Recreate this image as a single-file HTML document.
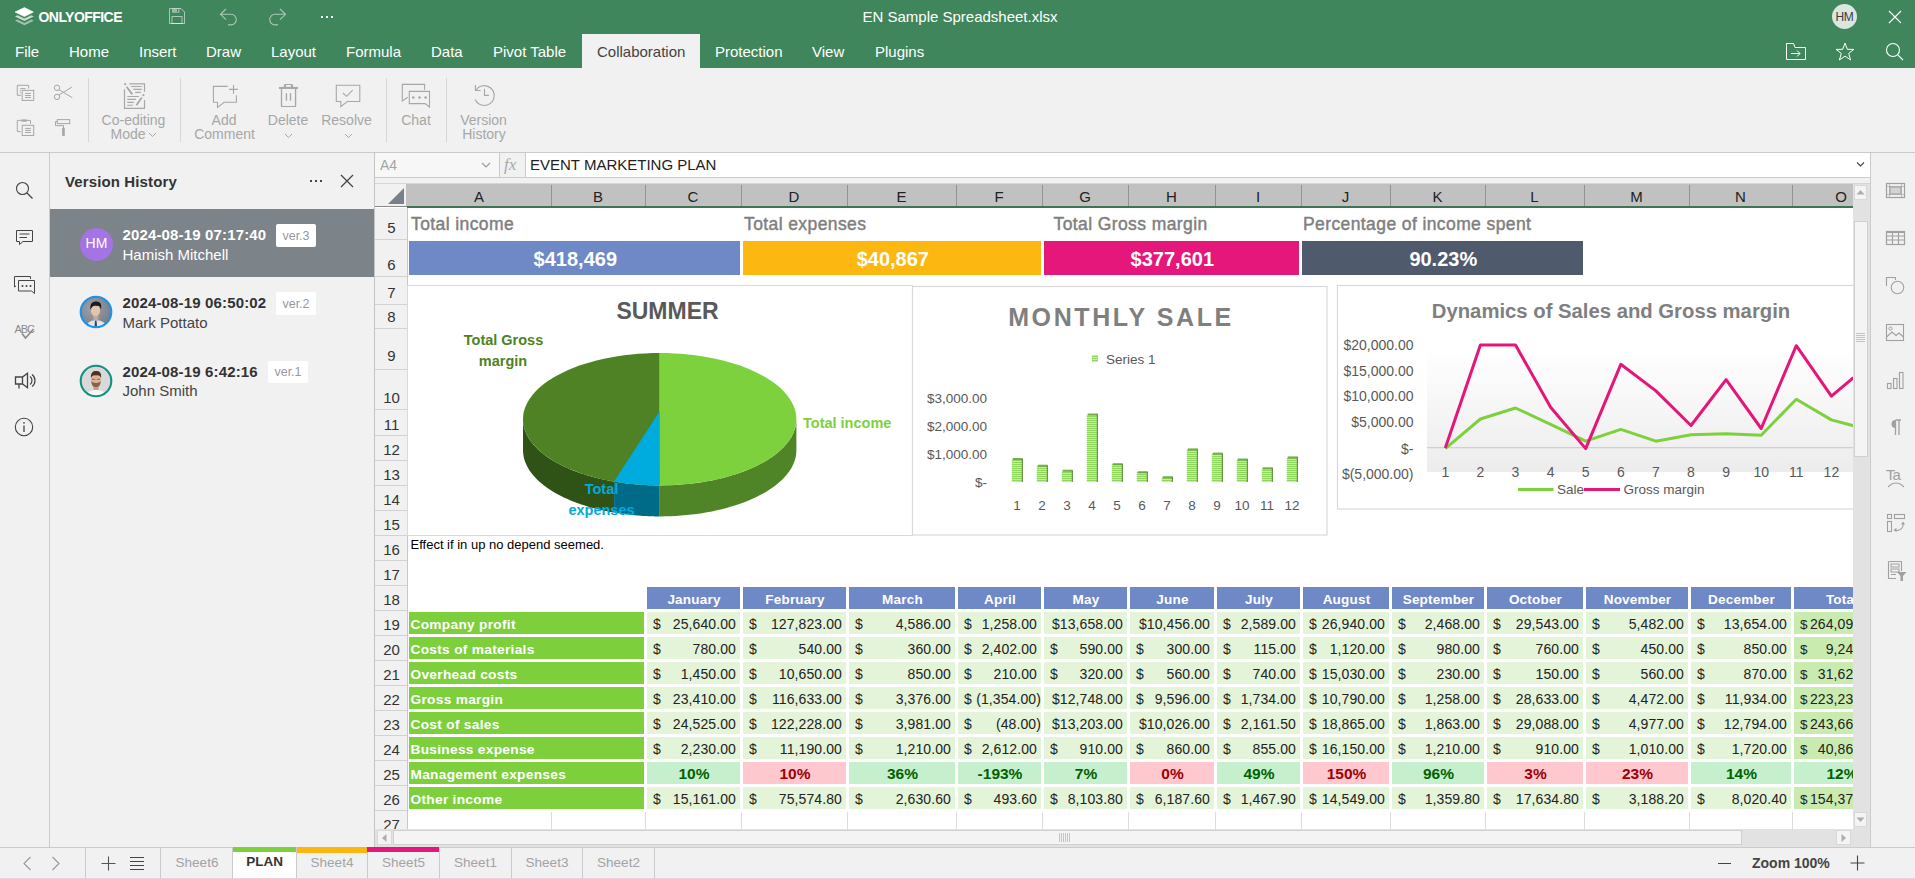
<!DOCTYPE html>
<html><head><meta charset="utf-8"><title>ONLYOFFICE</title>
<style>
html,body{margin:0;padding:0;}
body{width:1915px;height:879px;position:relative;overflow:hidden;background:#f1f1f1;font-family:"Liberation Sans", sans-serif;}
.t{position:absolute;white-space:nowrap;}
.r{position:absolute;}
</style></head><body>
<div class="r" style="left:0px;top:0px;width:1915px;height:68px;background:#40865c;"></div>
<svg class="r" style="left:14px;top:7px;" width="21" height="20" viewBox="0 0 21 20">
<path d="M10.4 0.6 L19.4 5.1 L10.4 9.6 L1 5.1 Z" fill="#fff" stroke="#fff" stroke-width="0.6" stroke-linejoin="round"/>
<path d="M1 9.4 L3.4 8.2 L10.4 11.6 L17.4 8.2 L19.8 9.4 L10.4 13.9 Z" fill="#fff" opacity="0.72"/>
<path d="M1 13.8 L3.4 12.6 L10.4 16 L17.4 12.6 L19.8 13.8 L10.4 18.3 Z" fill="#fff" opacity="0.5"/>
</svg>
<div class="t" style="left:38.5px;top:9.65px;font-size:14px;line-height:14px;color:#fff;font-weight:700;letter-spacing:-0.55px;">ONLYOFFICE</div>
<svg class="r" style="left:168px;top:7px;" width="18" height="18" viewBox="0 0 18 18">
<path d="M1.5 1.5 H13 L16.5 5 V16.5 H1.5 Z" fill="none" stroke="#fff" stroke-opacity="0.55" stroke-width="1"/>
<rect x="4" y="1.5" width="7.5" height="4.3" fill="#fff" fill-opacity="0.45"/><rect x="9" y="2" width="1.2" height="2.8" fill="#40865c"/>
<rect x="4" y="9.5" width="10" height="7" fill="none" stroke="#fff" stroke-opacity="0.55"/>
</svg>
<svg class="r" style="left:219px;top:7px;" width="19" height="19" viewBox="0 0 19 19">
<path d="M7 2 L1.5 7.3 L7 12.7 M1.5 7.3 H12 A5.3 5.3 0 0 1 12 17.9 H9" fill="none" stroke="#fff" stroke-opacity="0.55" stroke-width="1.1"/>
</svg>
<svg class="r" style="left:268px;top:7px;" width="19" height="19" viewBox="0 0 19 19">
<path d="M12 2 L17.5 7.3 L12 12.7 M17.5 7.3 H7 A5.3 5.3 0 0 0 7 17.9 H10" fill="none" stroke="#fff" stroke-opacity="0.55" stroke-width="1.1"/>
</svg>
<div class="r" style="left:321px;top:16px;width:2px;height:2px;background:#fff;"></div>
<div class="r" style="left:326px;top:16px;width:2px;height:2px;background:#fff;"></div>
<div class="r" style="left:331px;top:16px;width:2px;height:2px;background:#fff;"></div>
<div class="t" style="left:960px;top:9.30px;font-size:15px;line-height:15px;color:#fff;font-weight:400;transform:translateX(-50%);">EN Sample Spreadsheet.xlsx</div>
<div class="r" style="left:1832px;top:4px;width:25px;height:25px;border-radius:50%;background:#d9e7de;"></div>
<div class="t" style="left:1844.5px;top:10.84px;font-size:12px;line-height:12px;color:#3d3d3d;font-weight:400;transform:translateX(-50%);letter-spacing:-0.3px;">HM</div>
<svg class="r" style="left:1888px;top:10px;" width="14" height="14" viewBox="0 0 14 14"><path d="M1 1 L13 13 M13 1 L1 13" stroke="#fff" stroke-width="1.2"/></svg>
<div class="r" style="left:582px;top:34px;width:118px;height:34px;background:#f1f1f1;"></div>
<div class="t" style="left:15px;top:44.30px;font-size:15px;line-height:15px;color:#fff;font-weight:400;">File</div>
<div class="t" style="left:69px;top:44.30px;font-size:15px;line-height:15px;color:#fff;font-weight:400;">Home</div>
<div class="t" style="left:139px;top:44.30px;font-size:15px;line-height:15px;color:#fff;font-weight:400;">Insert</div>
<div class="t" style="left:206px;top:44.30px;font-size:15px;line-height:15px;color:#fff;font-weight:400;">Draw</div>
<div class="t" style="left:271px;top:44.30px;font-size:15px;line-height:15px;color:#fff;font-weight:400;">Layout</div>
<div class="t" style="left:346px;top:44.30px;font-size:15px;line-height:15px;color:#fff;font-weight:400;">Formula</div>
<div class="t" style="left:431px;top:44.30px;font-size:15px;line-height:15px;color:#fff;font-weight:400;">Data</div>
<div class="t" style="left:493px;top:44.30px;font-size:15px;line-height:15px;color:#fff;font-weight:400;">Pivot Table</div>
<div class="t" style="left:597px;top:44.30px;font-size:15px;line-height:15px;color:#444;font-weight:400;">Collaboration</div>
<div class="t" style="left:715px;top:44.30px;font-size:15px;line-height:15px;color:#fff;font-weight:400;">Protection</div>
<div class="t" style="left:812px;top:44.30px;font-size:15px;line-height:15px;color:#fff;font-weight:400;">View</div>
<div class="t" style="left:875px;top:44.30px;font-size:15px;line-height:15px;color:#fff;font-weight:400;">Plugins</div>
<svg class="r" style="left:1786px;top:43px;" width="20" height="17" viewBox="0 0 20 17">
<path d="M0.5 2.5 V16.5 H19.5 V4.5 H9 L7.5 0.5 H0.5 Z" fill="none" stroke="#fff" stroke-width="1"/>
<path d="M5 10.5 H14 M11 7.5 L14 10.5 L11 13.5" fill="none" stroke="#fff" stroke-width="1"/>
</svg>
<svg class="r" style="left:1835px;top:42px;" width="20" height="19" viewBox="0 0 20 19">
<path d="M10 1 L12.3 7.3 L19 7.4 L13.7 11.4 L15.6 18 L10 14.1 L4.4 18 L6.3 11.4 L1 7.4 L7.7 7.3 Z" fill="none" stroke="#fff" stroke-width="1"/>
</svg>
<svg class="r" style="left:1885px;top:42px;" width="19" height="19" viewBox="0 0 19 19">
<circle cx="8" cy="8" r="6.5" fill="none" stroke="#fff" stroke-width="1.1"/>
<path d="M12.8 12.8 L18 18" stroke="#fff" stroke-width="1.2"/>
</svg>
<div class="r" style="left:0px;top:68px;width:1915px;height:84px;background:#f1f1f1;"></div>
<div class="r" style="left:0px;top:152px;width:1915px;height:1px;background:#cbcbcb;"></div>
<div class="r" style="left:88px;top:78px;width:1px;height:64px;background:#d6d6d6;"></div>
<div class="r" style="left:180px;top:78px;width:1px;height:64px;background:#d6d6d6;"></div>
<div class="r" style="left:386px;top:78px;width:1px;height:64px;background:#d6d6d6;"></div>
<div class="r" style="left:446px;top:78px;width:1px;height:64px;background:#d6d6d6;"></div>
<svg class="r" style="left:10px;top:78px;" width="70" height="64" viewBox="0 0 70 64">
<g fill="none" stroke="#a7a7a7" stroke-width="1">
<path d="M10.9 17.3 H7.3 V7.3 H18.6 V10.7"/>
<path d="M10.2 10.6 H15.7"/>
<rect x="12.2" y="12.4" width="11.5" height="10"/>
<path d="M15.1 15.4 H20.9 M15.1 17.5 H20.9 M15.1 19.5 H20.9"/>
<circle cx="47" cy="9.8" r="2.7"/><circle cx="47" cy="18.9" r="2.7"/>
<path d="M48.9 11.6 L62.3 19.7 M48.9 17.1 L61.9 9.1"/>
<path d="M10.9 53.6 H7.3 V42.4 H11 M16.8 42.4 H20.5 V45.8"/>
<rect x="12.2" y="47.3" width="11.5" height="10.2"/>
<path d="M15.1 50.4 H20.9 M15.1 52.4 H20.9 M15.1 54.5 H20.9"/>
<rect x="47.3" y="41.6" width="12.4" height="4"/>
<path d="M47.3 43.5 H45.5 V47.6 H53.5 V50"/>
</g>
<circle cx="10.4" cy="12.5" r="0.6" fill="#a7a7a7"/><circle cx="10.4" cy="14.6" r="0.6" fill="#a7a7a7"/>
<rect x="11.3" y="41.4" width="5.5" height="2.3" fill="#a7a7a7"/>
<rect x="52.1" y="49.9" width="2.7" height="8" fill="#a7a7a7"/>
</svg>
<svg class="r" style="left:110px;top:76px;" width="50" height="40" viewBox="0 0 50 40">
<path d="M19.3 7.8 H34.5 V15.7 M34.5 24.1 V32.3 H14.5 V13.2" fill="none" stroke="#a7a7a7" stroke-width="1.2"/>
<path d="M21.1 10.5 H31.8 M23.2 13.4 H31.8 M25.2 16.4 H30.9 M17.3 20.5 H28.9 M17.3 23.4 H25.9 M17.3 26.4 H23.9 M17.3 29.3 H23" stroke="#a7a7a7" stroke-width="1.1"/>
<path d="M16.6 10.7 L22.3 18.4 M31.8 21.4 L26.4 29.3" stroke="#a7a7a7" stroke-width="1.8"/>
<circle cx="15.2" cy="8.2" r="1.1" fill="#a7a7a7"/><circle cx="33.4" cy="19.1" r="1.1" fill="#a7a7a7"/>
</svg>
<div class="t" style="left:133.5px;top:113.15px;font-size:14px;line-height:14px;color:#a7a7a7;font-weight:400;transform:translateX(-50%);">Co-editing</div>
<div class="t" style="left:128px;top:127.05px;font-size:14px;line-height:14px;color:#a7a7a7;font-weight:400;transform:translateX(-50%);">Mode</div>
<svg class="r" style="left:148px;top:132px;" width="9" height="6" viewBox="0 0 9 6"><path d="M1 1 L4.5 4.5 L8 1" fill="none" stroke="#a7a7a7"/></svg>
<svg class="r" style="left:205px;top:78px;" width="100" height="34" viewBox="0 0 100 34">
<g fill="none" stroke="#a7a7a7" stroke-width="1.1">
<path d="M22.7 8.4 H8.4 V24.3 H12.5 V29.5 L19.2 24.3 H31.4 V17.2"/>
<path d="M28.5 7 V15.7 M24 11.4 H32.9"/>
<path d="M74 10.4 H93"/>
<path d="M79.4 10.4 V7.5 Q79.4 6.5 80.4 6.5 H86.5 Q87.5 6.5 87.5 7.5 V10.4"/>
<path d="M76.5 10.4 V27.5 Q76.5 28.5 77.5 28.5 H89.6 Q90.6 28.5 90.6 27.5 V10.4"/>
<path d="M81.4 15.1 V22.7 M85.5 15.1 V22.7"/>
</g>
</svg>
<div class="t" style="left:224px;top:112.95px;font-size:14px;line-height:14px;color:#a7a7a7;font-weight:400;transform:translateX(-50%);">Add</div>
<div class="t" style="left:224.5px;top:127.05px;font-size:14px;line-height:14px;color:#a7a7a7;font-weight:400;transform:translateX(-50%);">Comment</div>
<svg class="r" style="left:278px;top:83px;" width="21" height="25" viewBox="0 0 21 25">
<path d="M1 4.5 H20" stroke="#a7a7a7" stroke-width="1.2"/>
<path d="M7.5 4.5 V1.5 H13.5 V4.5" fill="none" stroke="#a7a7a7" stroke-width="1.2"/>
<path d="M3.5 4.5 V23.5 H17.5 V4.5" fill="none" stroke="#a7a7a7" stroke-width="1.2"/>
<path d="M8.5 11 V17 M12.5 11 V17" stroke="#a7a7a7" stroke-width="1.2"/>
</svg>
<div class="t" style="left:288px;top:112.95px;font-size:14px;line-height:14px;color:#a7a7a7;font-weight:400;transform:translateX(-50%);">Delete</div>
<svg class="r" style="left:284px;top:133px;" width="9" height="6" viewBox="0 0 9 6"><path d="M1 1 L4.5 4.5 L8 1" fill="none" stroke="#a7a7a7"/></svg>
<svg class="r" style="left:325px;top:78px;" width="180" height="34" viewBox="0 0 180 34">
<g fill="none" stroke="#a7a7a7" stroke-width="1.1">
<path d="M15.8 23.5 H11.3 V7.3 H34.8 V23.5 H22.3 L15.8 28.7 Z"/>
<path d="M17.9 15 L21.6 18.3 L27.7 12.2"/>
<path d="M99.6 11.7 V6.4 H77.3 V23 L82.7 19.3"/>
<path d="M84.3 13.4 H104.5 V29.1 L100.1 25.6 H84.3 Z"/>
<path d="M150.8 12.4 A9.9 9.9 0 1 1 150.2 21.5"/>
<path d="M150.4 7 V12.5 H155.6"/>
<path d="M159.5 10.8 V17.4 H163.9"/>
</g>
<circle cx="88.3" cy="19.5" r="1.3" fill="#a7a7a7"/><circle cx="94.5" cy="19.5" r="1.3" fill="#a7a7a7"/><circle cx="100.6" cy="19.5" r="1.3" fill="#a7a7a7"/>
</svg>
<div class="t" style="left:346.5px;top:112.95px;font-size:14px;line-height:14px;color:#a7a7a7;font-weight:400;transform:translateX(-50%);">Resolve</div>
<svg class="r" style="left:344px;top:133px;" width="9" height="6" viewBox="0 0 9 6"><path d="M1 1 L4.5 4.5 L8 1" fill="none" stroke="#a7a7a7"/></svg>
<div class="t" style="left:416px;top:112.95px;font-size:14px;line-height:14px;color:#a7a7a7;font-weight:400;transform:translateX(-50%);">Chat</div>
<div class="t" style="left:483.5px;top:112.95px;font-size:14px;line-height:14px;color:#a7a7a7;font-weight:400;transform:translateX(-50%);">Version</div>
<div class="t" style="left:484px;top:127.05px;font-size:14px;line-height:14px;color:#a7a7a7;font-weight:400;transform:translateX(-50%);">History</div>
<div class="r" style="left:49px;top:153px;width:1px;height:694px;background:#cbcbcb;"></div>
<svg class="r" style="left:15px;top:181px;" width="19" height="19" viewBox="0 0 19 19"><circle cx="7.5" cy="7.5" r="6" fill="none" stroke="#444" stroke-width="1.1"/><path d="M12 12 L17.5 17.5" stroke="#444" stroke-width="1.2"/></svg>
<svg class="r" style="left:15px;top:229px;" width="19" height="17" viewBox="0 0 19 17"><path d="M1.5 1.5 H17.5 V12.5 H8 L4.5 15.5 V12.5 H1.5 Z" fill="none" stroke="#444"/><path d="M4.5 5 H14.5 M4.5 8.5 H12" stroke="#444"/></svg>
<svg class="r" style="left:13px;top:275px;" width="23" height="20" viewBox="0 0 23 20"><path d="M1.5 12 V1.5 H17.5 V4" fill="none" stroke="#444"/><path d="M1.5 12 L3 11" stroke="#444"/><path d="M5.5 5.5 H21.5 V18.5 L18.5 16 H5.5 Z" fill="none" stroke="#444"/><circle cx="9.5" cy="11" r="1" fill="#444"/><circle cx="13.5" cy="11" r="1" fill="#444"/><circle cx="17.5" cy="11" r="1" fill="#444"/></svg>
<div class="t" style="left:14.5px;top:323.69px;font-size:11px;line-height:11px;color:#8a8a8a;font-weight:400;letter-spacing:-1.1px;">ABC</div>
<svg class="r" style="left:20px;top:327px;" width="15" height="13" viewBox="0 0 15 13"><path d="M2 6.5 L5.5 11 L13.5 2" fill="none" stroke="#8a8a8a" stroke-width="1.6"/></svg>
<svg class="r" style="left:14px;top:372px;" width="22" height="18" viewBox="0 0 22 18"><path d="M1.5 5 H8.5 L13.5 1.2 V15.8 L8.5 12 H1.5 Z M8.5 5 V12 M5 12 V16.5" fill="none" stroke="#444" stroke-width="1.3"/><path d="M16 4.5 A5 5 0 0 1 16 12.5 M18 2.5 A7.5 7.5 0 0 1 18 14.5" fill="none" stroke="#444" stroke-width="1.2"/></svg>
<svg class="r" style="left:14px;top:417px;" width="20" height="20" viewBox="0 0 20 20"><circle cx="10" cy="10" r="8.7" fill="none" stroke="#444" stroke-width="1.1"/><path d="M10 8.5 V15" stroke="#444" stroke-width="1.3"/><circle cx="10" cy="5.8" r="0.9" fill="#444"/></svg>
<div class="t" style="left:65px;top:173.60px;font-size:15px;line-height:15px;color:#333;font-weight:700;letter-spacing:0.12px;">Version History</div>
<div class="r" style="left:310px;top:180px;width:2px;height:2px;background:#444;"></div>
<div class="r" style="left:315px;top:180px;width:2px;height:2px;background:#444;"></div>
<div class="r" style="left:320px;top:180px;width:2px;height:2px;background:#444;"></div>
<svg class="r" style="left:340px;top:174px;" width="14" height="14" viewBox="0 0 14 14"><path d="M1 1 L13 13 M13 1 L1 13" stroke="#444" stroke-width="1.3"/></svg>
<div class="r" style="left:50px;top:209px;width:324px;height:68px;background:#7c8389;"></div>
<div class="r" style="left:80px;top:228px;width:33px;height:33px;border-radius:50%;background:#a474e4;"></div>
<div class="t" style="left:96.5px;top:236.15px;font-size:14px;line-height:14px;color:#fff;font-weight:400;transform:translateX(-50%);">HM</div>
<div class="t" style="left:122.5px;top:226.80px;font-size:15px;line-height:15px;color:#fff;font-weight:700;letter-spacing:0.15px;">2024-08-19 07:17:40</div>
<div class="t" style="left:122.5px;top:247.30px;font-size:15px;line-height:15px;color:#fff;font-weight:400;">Hamish Mitchell</div>
<div class="r" style="left:276px;top:224px;width:40px;height:23px;border-radius:2px;background:#fff;"></div>
<div class="t" style="left:296px;top:229.92px;font-size:12.5px;line-height:12.5px;color:#999;font-weight:400;transform:translateX(-50%);">ver.3</div>
<svg class="r" style="left:79.3px;top:295.3px" width="34" height="34" viewBox="0 0 34 34">
<defs><clipPath id="cp312"><circle cx="17" cy="17" r="15"/></clipPath></defs>
<g clip-path="url(#cp312)"><defs><radialGradient id="mbg" cx="0.4" cy="0.4" r="0.7"><stop offset="0" stop-color="#9ca3ad"/><stop offset="1" stop-color="#6f7682"/></radialGradient></defs>
<rect width="34" height="34" fill="url(#mbg)"/>
<path d="M6 34 C8 27 12 25.5 17 25 C22 25.5 27 27 29 34 Z" fill="#dde7f2"/>
<path d="M16 25.5 L17.5 25.5 L18 31 L16.8 32 L15.6 31 Z" fill="#3a3f4a"/>
<rect x="14.3" y="19.5" width="5" height="6" fill="#c9a78f"/>
<ellipse cx="16.5" cy="15.5" rx="4.6" ry="5.8" fill="#e3c4ad"/>
<path d="M11.5 15 C10.5 8.5 13.5 6.5 17 6.5 C21 6.5 23 8.5 22 14.5 C21 11 19.5 10.5 17.5 11 C15 10 12.5 11.5 11.5 15 Z" fill="#1e1a1a"/></g>
<circle cx="17" cy="17" r="15.3" fill="none" stroke="#1e90e8" stroke-width="2.1"/>
</svg>
<div class="t" style="left:122.5px;top:294.80px;font-size:15px;line-height:15px;color:#333;font-weight:700;letter-spacing:0.15px;">2024-08-19 06:50:02</div>
<div class="t" style="left:122.5px;top:315.30px;font-size:15px;line-height:15px;color:#444;font-weight:400;">Mark Pottato</div>
<div class="r" style="left:276px;top:292px;width:40px;height:23px;border-radius:2px;background:#fff;"></div>
<div class="t" style="left:296px;top:297.92px;font-size:12.5px;line-height:12.5px;color:#999;font-weight:400;transform:translateX(-50%);">ver.2</div>
<svg class="r" style="left:79.3px;top:364px" width="34" height="34" viewBox="0 0 34 34">
<defs><clipPath id="cp381"><circle cx="17" cy="17" r="15"/></clipPath></defs>
<g clip-path="url(#cp381)"><rect width="34" height="34" fill="#d9d9d9"/>
<path d="M5 34 C7 27.5 12 26 17 26 C22 26 27 27.5 29 34 Z" fill="#f4f4f4"/>
<rect x="14.5" y="20" width="5" height="6" fill="#c59c83"/>
<ellipse cx="17" cy="16" rx="4.8" ry="6" fill="#dcb59b"/>
<path d="M12.3 17 C12.5 22 14.5 23 17 23 C19.5 23 21.5 22 21.7 17 C20.5 19.5 13.5 19.5 12.3 17 Z" fill="#8a5f45"/>
<path d="M12 14.5 C11.5 8.5 14 7 17 7 C20.5 7 22.8 8.5 22 14.5 C21.5 11.5 19.5 11 17 11.5 C14.5 11 12.8 11.5 12 14.5 Z" fill="#4a3326"/>
<path d="M12.8 15.3 H16.3 M17.7 15.3 H21.2" stroke="#5a4a40" stroke-width="0.7"/></g>
<circle cx="17" cy="17" r="15.3" fill="none" stroke="#13917f" stroke-width="2.1"/>
</svg>
<div class="t" style="left:122.5px;top:363.80px;font-size:15px;line-height:15px;color:#333;font-weight:700;letter-spacing:0.15px;">2024-08-19 6:42:16</div>
<div class="t" style="left:122.5px;top:383.30px;font-size:15px;line-height:15px;color:#444;font-weight:400;">John Smith</div>
<div class="r" style="left:268px;top:361px;width:40px;height:22px;border-radius:2px;background:#fff;"></div>
<div class="t" style="left:288px;top:365.92px;font-size:12.5px;line-height:12.5px;color:#999;font-weight:400;transform:translateX(-50%);">ver.1</div>
<div class="r" style="left:0px;top:847px;width:1915px;height:1px;background:#cbcbcb;"></div>
<div class="r" style="left:85px;top:848px;width:1px;height:31px;background:#cbcbcb;"></div>
<div class="r" style="left:160px;top:848px;width:1px;height:31px;background:#cbcbcb;"></div>
<svg class="r" style="left:21px;top:856px;" width="12" height="15" viewBox="0 0 12 15"><path d="M9.5 1 L3 7.5 L9.5 14" fill="none" stroke="#999" stroke-width="1.1"/></svg>
<svg class="r" style="left:50px;top:856px;" width="12" height="15" viewBox="0 0 12 15"><path d="M2.5 1 L9 7.5 L2.5 14" fill="none" stroke="#999" stroke-width="1.1"/></svg>
<svg class="r" style="left:101px;top:856px;" width="15" height="15" viewBox="0 0 15 15"><path d="M7.5 0.5 V14.5 M0.5 7.5 H14.5" stroke="#555" stroke-width="1.1"/></svg>
<svg class="r" style="left:130px;top:856px;" width="15" height="15" viewBox="0 0 15 15"><path d="M0 1.5 H14 M0 5.5 H14 M0 9.5 H14 M0 13.5 H14" stroke="#444" stroke-width="1.1"/></svg>
<div class="r" style="left:232px;top:848px;width:1px;height:31px;background:#cbcbcb;"></div>
<div class="t" style="left:197.0px;top:856.07px;font-size:13.5px;line-height:13.5px;color:#a3a3a3;font-weight:400;transform:translateX(-50%);">Sheet6</div>
<div class="r" style="left:233px;top:848px;width:63px;height:31px;background:#fff;"></div>
<div class="r" style="left:296px;top:848px;width:1px;height:31px;background:#cbcbcb;"></div>
<div class="r" style="left:233px;top:847px;width:63px;height:5px;background:#7cd03c;"></div>
<div class="t" style="left:264.5px;top:855.27px;font-size:13.5px;line-height:13.5px;color:#333;font-weight:700;transform:translateX(-50%);">PLAN</div>
<div class="r" style="left:367px;top:848px;width:1px;height:31px;background:#cbcbcb;"></div>
<div class="r" style="left:297px;top:847px;width:70px;height:6px;background:#fbb711;"></div>
<div class="t" style="left:332.0px;top:856.07px;font-size:13.5px;line-height:13.5px;color:#a3a3a3;font-weight:400;transform:translateX(-50%);">Sheet4</div>
<div class="r" style="left:439px;top:848px;width:1px;height:31px;background:#cbcbcb;"></div>
<div class="r" style="left:367px;top:847px;width:72px;height:5px;background:#e6157a;"></div>
<div class="t" style="left:403.5px;top:856.07px;font-size:13.5px;line-height:13.5px;color:#a3a3a3;font-weight:400;transform:translateX(-50%);">Sheet5</div>
<div class="r" style="left:511px;top:848px;width:1px;height:31px;background:#cbcbcb;"></div>
<div class="t" style="left:475.5px;top:856.07px;font-size:13.5px;line-height:13.5px;color:#a3a3a3;font-weight:400;transform:translateX(-50%);">Sheet1</div>
<div class="r" style="left:582px;top:848px;width:1px;height:31px;background:#cbcbcb;"></div>
<div class="t" style="left:547.0px;top:856.07px;font-size:13.5px;line-height:13.5px;color:#a3a3a3;font-weight:400;transform:translateX(-50%);">Sheet3</div>
<div class="r" style="left:654px;top:848px;width:1px;height:31px;background:#cbcbcb;"></div>
<div class="t" style="left:618.5px;top:856.07px;font-size:13.5px;line-height:13.5px;color:#a3a3a3;font-weight:400;transform:translateX(-50%);">Sheet2</div>
<div class="t" style="left:1752px;top:855.75px;font-size:14px;line-height:14px;color:#444;font-weight:700;">Zoom 100%</div>
<div class="r" style="left:1718px;top:863px;width:13px;height:1px;background:#444;"></div>
<svg class="r" style="left:1850px;top:855px;" width="15" height="16" viewBox="0 0 15 16"><path d="M7.5 0.5 V15.5 M0.5 8 H14.5" stroke="#444" stroke-width="1.1"/></svg>
<div class="r" style="left:0px;top:878px;width:1915px;height:1px;background:#ddd6e0;"></div>
<div class="r" style="left:1870px;top:153px;width:1px;height:694px;background:#cbcbcb;"></div>
<svg class="r" style="left:1885px;top:182px;" width="21" height="17" viewBox="0 0 21 17"><rect x="1.5" y="1.5" width="18" height="14" fill="none" stroke="#a0a0a0" stroke-width="1.2"/><rect x="5" y="5" width="11" height="7" fill="#d3d3d3" stroke="#a0a0a0" stroke-width="1.1"/><path d="M1.5 4.5 H19.5 M1.5 12.5 H19.5 M4.5 1.5 V15.5 M16.5 1.5 V15.5" stroke="#a0a0a0" stroke-width="0.6"/></svg>
<svg class="r" style="left:1885px;top:230px;" width="21" height="16" viewBox="0 0 21 16"><rect x="1.5" y="1.5" width="18" height="13" fill="none" stroke="#a0a0a0" stroke-width="1.2"/><path d="M1.5 2 H19.5" stroke="#a0a0a0" stroke-width="2"/><path d="M1.5 6 H19.5 M1.5 10 H19.5 M7.5 1.5 V14.5 M13.5 1.5 V14.5" stroke="#a0a0a0" stroke-width="1.1"/></svg>
<svg class="r" style="left:1885px;top:276px;" width="21" height="19" viewBox="0 0 21 19"><path d="M1.5 10 V1.5 H10.5 V4" fill="none" stroke="#a0a0a0" stroke-width="1.1"/><circle cx="12.5" cy="11.5" r="6.3" fill="none" stroke="#a0a0a0" stroke-width="1.1"/></svg>
<svg class="r" style="left:1885px;top:323px;" width="20" height="19" viewBox="0 0 20 19"><rect x="1.5" y="1.5" width="17" height="16" fill="none" stroke="#a0a0a0" stroke-width="1.1"/><circle cx="5.5" cy="5.5" r="1.6" fill="none" stroke="#a0a0a0"/><path d="M1.5 14 L7 9 L11 12.5 L14 10 L18.5 14" fill="none" stroke="#a0a0a0" stroke-width="1.1"/></svg>
<svg class="r" style="left:1886px;top:371px;" width="19" height="19" viewBox="0 0 19 19"><rect x="1.5" y="12.5" width="3.5" height="5" fill="none" stroke="#a0a0a0" stroke-width="1.1"/><rect x="7.5" y="7.5" width="3.5" height="10" fill="none" stroke="#a0a0a0" stroke-width="1.1"/><rect x="13.5" y="1.5" width="3.5" height="16" fill="none" stroke="#a0a0a0" stroke-width="1.1"/></svg>
<svg class="r" style="left:1889px;top:419px;" width="13" height="17" viewBox="0 0 13 17"><path d="M6.5 1 H12 M6.5 1 V16 M10 1 V16" stroke="#a0a0a0" stroke-width="1.3"/><path d="M6.5 1 A4 4 0 0 0 6.5 9 Z" fill="#a0a0a0"/></svg>
<div class="t" style="left:1886px;top:467.30px;font-size:15px;line-height:15px;color:#a0a0a0;font-weight:400;letter-spacing:-1px;">Ta</div>
<svg class="r" style="left:1886px;top:481px;" width="20" height="7" viewBox="0 0 20 7"><path d="M2 6 Q10 -2 18 6" fill="none" stroke="#a0a0a0" stroke-width="1.1"/></svg>
<svg class="r" style="left:1886px;top:513px;" width="20" height="20" viewBox="0 0 20 20"><rect x="1.5" y="1.5" width="4" height="4" fill="none" stroke="#a0a0a0" stroke-width="1.1"/><rect x="8.5" y="1.5" width="10" height="4" fill="none" stroke="#a0a0a0" stroke-width="1.1"/><rect x="1.5" y="8.5" width="4" height="10" fill="none" stroke="#a0a0a0" stroke-width="1.1"/><path d="M9 17 A6 6 0 0 0 17 10 M15.5 11.5 L17 9.5 L18.5 11.5 M10.5 15.5 L8.5 17 L10.5 18.5" fill="none" stroke="#a0a0a0" stroke-width="1.1"/></svg>
<svg class="r" style="left:1887px;top:560px;" width="20" height="22" viewBox="0 0 20 22"><path d="M1.5 1.5 H14.5 V11 M9 18.5 H1.5 V1.5" fill="none" stroke="#a0a0a0" stroke-width="1.1"/><rect x="4" y="4" width="8" height="3" fill="none" stroke="#a0a0a0" stroke-width="1"/><rect x="4" y="9" width="8" height="3" fill="none" stroke="#a0a0a0" stroke-width="1"/><path d="M4 14.5 H9" stroke="#a0a0a0"/><path d="M10 12 H19.5 L16 16 V21 H13.5 V16 Z" fill="#a0a0a0"/></svg>
<div class="r" style="left:375px;top:153px;width:124px;height:24px;background:#f7f7f7;"></div>
<div class="r" style="left:499px;top:153px;width:1px;height:24px;background:#cbcbcb;"></div>
<div class="r" style="left:500px;top:153px;width:25px;height:24px;background:#f1f1f1;"></div>
<div class="r" style="left:525px;top:153px;width:1px;height:24px;background:#cbcbcb;"></div>
<div class="r" style="left:526px;top:153px;width:1344px;height:24px;background:#fff;"></div>
<div class="r" style="left:375px;top:177px;width:1495px;height:1px;background:#cbcbcb;"></div>
<div class="r" style="left:375px;top:178px;width:1495px;height:5px;background:#f1f1f1;"></div>
<div class="r" style="left:375px;top:183px;width:1495px;height:1px;background:#d5d5d5;"></div>
<div class="t" style="left:380px;top:158.15px;font-size:14px;line-height:14px;color:#a5a5a5;font-weight:400;">A4</div>
<svg class="r" style="left:481px;top:162px;" width="10" height="7" viewBox="0 0 10 7"><path d="M1 1 L5 5 L9 1" fill="none" stroke="#999" stroke-width="1.1"/></svg>
<div class="t" style="left:504px;top:156.11px;font-size:17px;line-height:17px;color:#a8a8a8;font-weight:400;font-family:'Liberation Serif',serif;"><i>fx</i></div>
<div class="t" style="left:530px;top:157.30px;font-size:15px;line-height:15px;color:#222;font-weight:400;">EVENT MARKETING PLAN</div>
<svg class="r" style="left:1856px;top:161px;" width="10" height="7" viewBox="0 0 10 7"><path d="M1 1.5 L4.5 5 L8 1.5" fill="none" stroke="#444" stroke-width="1.1"/></svg>
<div class="r" style="left:375px;top:184px;width:1478px;height:645px;overflow:hidden;background:#fff;">
<div class="r" style="left:0px;top:0px;width:32px;height:22px;background:#f1f1f1;"></div>
<div class="r" style="left:32px;top:0px;width:1496px;height:22px;background:#c1c1c1;"></div>
<div class="r" style="left:32px;top:22px;width:1500px;height:2px;background:#3d7455;"></div>
<div class="r" style="left:0px;top:22px;width:32px;height:1px;background:#8a8a8a;"></div>
<svg class="r" style="left:13px;top:4px;" width="17" height="17" viewBox="0 0 17 17"><path d="M16 0 V16 H0 Z" fill="#7a8088"/></svg>
<div class="r" style="left:31px;top:0px;width:1px;height:22px;background:#c0c0c0;"></div>
<div class="r" style="left:176px;top:1px;width:1px;height:21px;background:#929292;"></div>
<div class="t" style="left:104.0px;top:5.30px;font-size:15px;line-height:15px;color:#222;font-weight:400;transform:translateX(-50%);">A</div>
<div class="r" style="left:270px;top:1px;width:1px;height:21px;background:#929292;"></div>
<div class="t" style="left:223.0px;top:5.30px;font-size:15px;line-height:15px;color:#222;font-weight:400;transform:translateX(-50%);">B</div>
<div class="r" style="left:366px;top:1px;width:1px;height:21px;background:#929292;"></div>
<div class="t" style="left:318.0px;top:5.30px;font-size:15px;line-height:15px;color:#222;font-weight:400;transform:translateX(-50%);">C</div>
<div class="r" style="left:472px;top:1px;width:1px;height:21px;background:#929292;"></div>
<div class="t" style="left:419.0px;top:5.30px;font-size:15px;line-height:15px;color:#222;font-weight:400;transform:translateX(-50%);">D</div>
<div class="r" style="left:581px;top:1px;width:1px;height:21px;background:#929292;"></div>
<div class="t" style="left:526.5px;top:5.30px;font-size:15px;line-height:15px;color:#222;font-weight:400;transform:translateX(-50%);">E</div>
<div class="r" style="left:667px;top:1px;width:1px;height:21px;background:#929292;"></div>
<div class="t" style="left:624.0px;top:5.30px;font-size:15px;line-height:15px;color:#222;font-weight:400;transform:translateX(-50%);">F</div>
<div class="r" style="left:753px;top:1px;width:1px;height:21px;background:#929292;"></div>
<div class="t" style="left:710.0px;top:5.30px;font-size:15px;line-height:15px;color:#222;font-weight:400;transform:translateX(-50%);">G</div>
<div class="r" style="left:840px;top:1px;width:1px;height:21px;background:#929292;"></div>
<div class="t" style="left:796.5px;top:5.30px;font-size:15px;line-height:15px;color:#222;font-weight:400;transform:translateX(-50%);">H</div>
<div class="r" style="left:926px;top:1px;width:1px;height:21px;background:#929292;"></div>
<div class="t" style="left:883.0px;top:5.30px;font-size:15px;line-height:15px;color:#222;font-weight:400;transform:translateX(-50%);">I</div>
<div class="r" style="left:1015px;top:1px;width:1px;height:21px;background:#929292;"></div>
<div class="t" style="left:970.5px;top:5.30px;font-size:15px;line-height:15px;color:#222;font-weight:400;transform:translateX(-50%);">J</div>
<div class="r" style="left:1110px;top:1px;width:1px;height:21px;background:#929292;"></div>
<div class="t" style="left:1062.5px;top:5.30px;font-size:15px;line-height:15px;color:#222;font-weight:400;transform:translateX(-50%);">K</div>
<div class="r" style="left:1209px;top:1px;width:1px;height:21px;background:#929292;"></div>
<div class="t" style="left:1159.5px;top:5.30px;font-size:15px;line-height:15px;color:#222;font-weight:400;transform:translateX(-50%);">L</div>
<div class="r" style="left:1314px;top:1px;width:1px;height:21px;background:#929292;"></div>
<div class="t" style="left:1261.5px;top:5.30px;font-size:15px;line-height:15px;color:#222;font-weight:400;transform:translateX(-50%);">M</div>
<div class="r" style="left:1417px;top:1px;width:1px;height:21px;background:#929292;"></div>
<div class="t" style="left:1365.5px;top:5.30px;font-size:15px;line-height:15px;color:#222;font-weight:400;transform:translateX(-50%);">N</div>
<div class="r" style="left:1515px;top:1px;width:1px;height:21px;background:#929292;"></div>
<div class="t" style="left:1466.0px;top:5.30px;font-size:15px;line-height:15px;color:#222;font-weight:400;transform:translateX(-50%);">O</div>
<div class="r" style="left:0px;top:24px;width:32px;height:650px;background:#f1f1f1;"></div>
<div class="r" style="left:32px;top:24px;width:1px;height:650px;background:#c8c8c8;"></div>
<div class="r" style="left:0px;top:55px;width:32px;height:1px;background:#d2d2d2;"></div>
<div class="t" style="left:16.5px;top:35.80px;font-size:15px;line-height:15px;color:#333;font-weight:400;transform:translateX(-50%);">5</div>
<div class="r" style="left:0px;top:92px;width:32px;height:1px;background:#d2d2d2;"></div>
<div class="t" style="left:16.5px;top:72.80px;font-size:15px;line-height:15px;color:#333;font-weight:400;transform:translateX(-50%);">6</div>
<div class="r" style="left:0px;top:120px;width:32px;height:1px;background:#d2d2d2;"></div>
<div class="t" style="left:16.5px;top:100.80px;font-size:15px;line-height:15px;color:#333;font-weight:400;transform:translateX(-50%);">7</div>
<div class="r" style="left:0px;top:144px;width:32px;height:1px;background:#d2d2d2;"></div>
<div class="t" style="left:16.5px;top:124.80px;font-size:15px;line-height:15px;color:#333;font-weight:400;transform:translateX(-50%);">8</div>
<div class="r" style="left:0px;top:185px;width:32px;height:1px;background:#d2d2d2;"></div>
<div class="t" style="left:16.5px;top:163.80px;font-size:15px;line-height:15px;color:#333;font-weight:400;transform:translateX(-50%);">9</div>
<div class="r" style="left:0px;top:225px;width:32px;height:1px;background:#d2d2d2;"></div>
<div class="t" style="left:16.5px;top:205.80px;font-size:15px;line-height:15px;color:#333;font-weight:400;transform:translateX(-50%);">10</div>
<div class="r" style="left:0px;top:251px;width:32px;height:1px;background:#d2d2d2;"></div>
<div class="t" style="left:16.5px;top:232.80px;font-size:15px;line-height:15px;color:#333;font-weight:400;transform:translateX(-50%);">11</div>
<div class="r" style="left:0px;top:276px;width:32px;height:1px;background:#d2d2d2;"></div>
<div class="t" style="left:16.5px;top:257.80px;font-size:15px;line-height:15px;color:#333;font-weight:400;transform:translateX(-50%);">12</div>
<div class="r" style="left:0px;top:301px;width:32px;height:1px;background:#d2d2d2;"></div>
<div class="t" style="left:16.5px;top:282.80px;font-size:15px;line-height:15px;color:#333;font-weight:400;transform:translateX(-50%);">13</div>
<div class="r" style="left:0px;top:326px;width:32px;height:1px;background:#d2d2d2;"></div>
<div class="t" style="left:16.5px;top:307.80px;font-size:15px;line-height:15px;color:#333;font-weight:400;transform:translateX(-50%);">14</div>
<div class="r" style="left:0px;top:351px;width:32px;height:1px;background:#d2d2d2;"></div>
<div class="t" style="left:16.5px;top:332.80px;font-size:15px;line-height:15px;color:#333;font-weight:400;transform:translateX(-50%);">15</div>
<div class="r" style="left:0px;top:376px;width:32px;height:1px;background:#d2d2d2;"></div>
<div class="t" style="left:16.5px;top:357.80px;font-size:15px;line-height:15px;color:#333;font-weight:400;transform:translateX(-50%);">16</div>
<div class="r" style="left:0px;top:401px;width:32px;height:1px;background:#d2d2d2;"></div>
<div class="t" style="left:16.5px;top:382.80px;font-size:15px;line-height:15px;color:#333;font-weight:400;transform:translateX(-50%);">17</div>
<div class="r" style="left:0px;top:426px;width:32px;height:1px;background:#d2d2d2;"></div>
<div class="t" style="left:16.5px;top:407.80px;font-size:15px;line-height:15px;color:#333;font-weight:400;transform:translateX(-50%);">18</div>
<div class="r" style="left:0px;top:451px;width:32px;height:1px;background:#d2d2d2;"></div>
<div class="t" style="left:16.5px;top:432.80px;font-size:15px;line-height:15px;color:#333;font-weight:400;transform:translateX(-50%);">19</div>
<div class="r" style="left:0px;top:476px;width:32px;height:1px;background:#d2d2d2;"></div>
<div class="t" style="left:16.5px;top:457.80px;font-size:15px;line-height:15px;color:#333;font-weight:400;transform:translateX(-50%);">20</div>
<div class="r" style="left:0px;top:501px;width:32px;height:1px;background:#d2d2d2;"></div>
<div class="t" style="left:16.5px;top:482.80px;font-size:15px;line-height:15px;color:#333;font-weight:400;transform:translateX(-50%);">21</div>
<div class="r" style="left:0px;top:526px;width:32px;height:1px;background:#d2d2d2;"></div>
<div class="t" style="left:16.5px;top:507.80px;font-size:15px;line-height:15px;color:#333;font-weight:400;transform:translateX(-50%);">22</div>
<div class="r" style="left:0px;top:551px;width:32px;height:1px;background:#d2d2d2;"></div>
<div class="t" style="left:16.5px;top:532.80px;font-size:15px;line-height:15px;color:#333;font-weight:400;transform:translateX(-50%);">23</div>
<div class="r" style="left:0px;top:576px;width:32px;height:1px;background:#d2d2d2;"></div>
<div class="t" style="left:16.5px;top:557.80px;font-size:15px;line-height:15px;color:#333;font-weight:400;transform:translateX(-50%);">24</div>
<div class="r" style="left:0px;top:601px;width:32px;height:1px;background:#d2d2d2;"></div>
<div class="t" style="left:16.5px;top:582.80px;font-size:15px;line-height:15px;color:#333;font-weight:400;transform:translateX(-50%);">25</div>
<div class="r" style="left:0px;top:626px;width:32px;height:1px;background:#d2d2d2;"></div>
<div class="t" style="left:16.5px;top:607.80px;font-size:15px;line-height:15px;color:#333;font-weight:400;transform:translateX(-50%);">26</div>
<div class="r" style="left:0px;top:651px;width:32px;height:1px;background:#d2d2d2;"></div>
<div class="t" style="left:16.5px;top:632.80px;font-size:15px;line-height:15px;color:#333;font-weight:400;transform:translateX(-50%);">27</div>
<div class="t" style="left:36px;top:31.89px;font-size:17.5px;line-height:17.5px;color:#7f7f7f;font-weight:400;letter-spacing:0.4px;-webkit-text-stroke:0.45px #7f7f7f;">Total income</div>
<div class="t" style="left:369px;top:31.89px;font-size:17.5px;line-height:17.5px;color:#7f7f7f;font-weight:400;letter-spacing:0.4px;-webkit-text-stroke:0.45px #7f7f7f;">Total expenses</div>
<div class="t" style="left:678.5px;top:31.89px;font-size:17.5px;line-height:17.5px;color:#7f7f7f;font-weight:400;letter-spacing:0.4px;-webkit-text-stroke:0.45px #7f7f7f;">Total Gross margin</div>
<div class="t" style="left:928px;top:31.89px;font-size:17.5px;line-height:17.5px;color:#7f7f7f;font-weight:400;letter-spacing:0.4px;-webkit-text-stroke:0.45px #7f7f7f;">Percentage of income spent</div>
<div class="r" style="left:34px;top:57px;width:331px;height:34px;background:#6f89c7;"></div>
<div class="t" style="left:200.29999999999995px;top:65.47px;font-size:20px;line-height:20px;color:#fff;font-weight:700;transform:translateX(-50%);">$418,469</div>
<div class="r" style="left:368px;top:57px;width:298px;height:34px;background:#fcb711;"></div>
<div class="t" style="left:517.8px;top:65.47px;font-size:20px;line-height:20px;color:#fff;font-weight:700;transform:translateX(-50%);">$40,867</div>
<div class="r" style="left:669px;top:57px;width:255px;height:34px;background:#e6177a;"></div>
<div class="t" style="left:797.3px;top:65.47px;font-size:20px;line-height:20px;color:#fff;font-weight:700;transform:translateX(-50%);">$377,601</div>
<div class="r" style="left:927px;top:57px;width:281px;height:34px;background:#4f5b6d;"></div>
<div class="t" style="left:1068.3px;top:65.47px;font-size:20px;line-height:20px;color:#fff;font-weight:700;transform:translateX(-50%);">90.23%</div>
<div class="t" style="left:35.5px;top:354.00px;font-size:13px;line-height:13px;color:#000;font-weight:400;">Effect if in up no depend seemed.</div>
<div class="r" style="left:272px;top:403px;width:93px;height:22px;background:#6f89c7;"></div>
<div class="t" style="left:319.0px;top:408.57px;font-size:13.5px;line-height:13.5px;color:#fff;font-weight:700;transform:translateX(-50%);letter-spacing:0.2px;">January</div>
<div class="r" style="left:368px;top:403px;width:103px;height:22px;background:#6f89c7;"></div>
<div class="t" style="left:420.0px;top:408.57px;font-size:13.5px;line-height:13.5px;color:#fff;font-weight:700;transform:translateX(-50%);letter-spacing:0.2px;">February</div>
<div class="r" style="left:474px;top:403px;width:106px;height:22px;background:#6f89c7;"></div>
<div class="t" style="left:527.5px;top:408.57px;font-size:13.5px;line-height:13.5px;color:#fff;font-weight:700;transform:translateX(-50%);letter-spacing:0.2px;">March</div>
<div class="r" style="left:583px;top:403px;width:83px;height:22px;background:#6f89c7;"></div>
<div class="t" style="left:625.0px;top:408.57px;font-size:13.5px;line-height:13.5px;color:#fff;font-weight:700;transform:translateX(-50%);letter-spacing:0.2px;">April</div>
<div class="r" style="left:669px;top:403px;width:83px;height:22px;background:#6f89c7;"></div>
<div class="t" style="left:711.0px;top:408.57px;font-size:13.5px;line-height:13.5px;color:#fff;font-weight:700;transform:translateX(-50%);letter-spacing:0.2px;">May</div>
<div class="r" style="left:755px;top:403px;width:84px;height:22px;background:#6f89c7;"></div>
<div class="t" style="left:797.5px;top:408.57px;font-size:13.5px;line-height:13.5px;color:#fff;font-weight:700;transform:translateX(-50%);letter-spacing:0.2px;">June</div>
<div class="r" style="left:842px;top:403px;width:83px;height:22px;background:#6f89c7;"></div>
<div class="t" style="left:884.0px;top:408.57px;font-size:13.5px;line-height:13.5px;color:#fff;font-weight:700;transform:translateX(-50%);letter-spacing:0.2px;">July</div>
<div class="r" style="left:928px;top:403px;width:86px;height:22px;background:#6f89c7;"></div>
<div class="t" style="left:971.5px;top:408.57px;font-size:13.5px;line-height:13.5px;color:#fff;font-weight:700;transform:translateX(-50%);letter-spacing:0.2px;">August</div>
<div class="r" style="left:1017px;top:403px;width:92px;height:22px;background:#6f89c7;"></div>
<div class="t" style="left:1063.5px;top:408.57px;font-size:13.5px;line-height:13.5px;color:#fff;font-weight:700;transform:translateX(-50%);letter-spacing:0.2px;">September</div>
<div class="r" style="left:1112px;top:403px;width:96px;height:22px;background:#6f89c7;"></div>
<div class="t" style="left:1160.5px;top:408.57px;font-size:13.5px;line-height:13.5px;color:#fff;font-weight:700;transform:translateX(-50%);letter-spacing:0.2px;">October</div>
<div class="r" style="left:1211px;top:403px;width:102px;height:22px;background:#6f89c7;"></div>
<div class="t" style="left:1262.5px;top:408.57px;font-size:13.5px;line-height:13.5px;color:#fff;font-weight:700;transform:translateX(-50%);letter-spacing:0.2px;">November</div>
<div class="r" style="left:1316px;top:403px;width:100px;height:22px;background:#6f89c7;"></div>
<div class="t" style="left:1366.5px;top:408.57px;font-size:13.5px;line-height:13.5px;color:#fff;font-weight:700;transform:translateX(-50%);letter-spacing:0.2px;">December</div>
<div class="r" style="left:1419px;top:403px;width:95px;height:22px;background:#6f89c7;"></div>
<div class="t" style="left:1467.0px;top:408.57px;font-size:13.5px;line-height:13.5px;color:#fff;font-weight:700;transform:translateX(-50%);letter-spacing:0.2px;">Total</div>
<div class="r" style="left:34px;top:428px;width:235px;height:22px;background:#7dcf3c;"></div>
<div class="t" style="left:35.5px;top:434.20px;font-size:13.7px;line-height:13.7px;color:#fff;font-weight:700;letter-spacing:0.3px;">Company profit</div>
<div class="r" style="left:272px;top:428px;width:93px;height:22px;background:#e3f4d9;"></div>
<div class="t" style="left:278px;top:433.15px;font-size:14px;line-height:14px;color:#222;font-weight:400;">$</div>
<div class="t" style="left:361px;top:433.15px;font-size:14px;line-height:14px;color:#222;font-weight:400;transform:translateX(-100%);letter-spacing:0.1px;">25,640.00</div>
<div class="r" style="left:368px;top:428px;width:103px;height:22px;background:#e3f4d9;"></div>
<div class="t" style="left:374px;top:433.15px;font-size:14px;line-height:14px;color:#222;font-weight:400;">$</div>
<div class="t" style="left:467px;top:433.15px;font-size:14px;line-height:14px;color:#222;font-weight:400;transform:translateX(-100%);letter-spacing:0.1px;">127,823.00</div>
<div class="r" style="left:474px;top:428px;width:106px;height:22px;background:#e3f4d9;"></div>
<div class="t" style="left:480px;top:433.15px;font-size:14px;line-height:14px;color:#222;font-weight:400;">$</div>
<div class="t" style="left:576px;top:433.15px;font-size:14px;line-height:14px;color:#222;font-weight:400;transform:translateX(-100%);letter-spacing:0.1px;">4,586.00</div>
<div class="r" style="left:583px;top:428px;width:83px;height:22px;background:#e3f4d9;"></div>
<div class="t" style="left:589px;top:433.15px;font-size:14px;line-height:14px;color:#222;font-weight:400;">$</div>
<div class="t" style="left:662px;top:433.15px;font-size:14px;line-height:14px;color:#222;font-weight:400;transform:translateX(-100%);letter-spacing:0.1px;">1,258.00</div>
<div class="r" style="left:669px;top:428px;width:83px;height:22px;background:#e3f4d9;"></div>
<div class="t" style="left:748px;top:433.15px;font-size:14px;line-height:14px;color:#222;font-weight:400;transform:translateX(-100%);letter-spacing:0.1px;">$13,658.00</div>
<div class="r" style="left:755px;top:428px;width:84px;height:22px;background:#e3f4d9;"></div>
<div class="t" style="left:835px;top:433.15px;font-size:14px;line-height:14px;color:#222;font-weight:400;transform:translateX(-100%);letter-spacing:0.1px;">$10,456.00</div>
<div class="r" style="left:842px;top:428px;width:83px;height:22px;background:#e3f4d9;"></div>
<div class="t" style="left:848px;top:433.15px;font-size:14px;line-height:14px;color:#222;font-weight:400;">$</div>
<div class="t" style="left:921px;top:433.15px;font-size:14px;line-height:14px;color:#222;font-weight:400;transform:translateX(-100%);letter-spacing:0.1px;">2,589.00</div>
<div class="r" style="left:928px;top:428px;width:86px;height:22px;background:#e3f4d9;"></div>
<div class="t" style="left:934px;top:433.15px;font-size:14px;line-height:14px;color:#222;font-weight:400;">$</div>
<div class="t" style="left:1010px;top:433.15px;font-size:14px;line-height:14px;color:#222;font-weight:400;transform:translateX(-100%);letter-spacing:0.1px;">26,940.00</div>
<div class="r" style="left:1017px;top:428px;width:92px;height:22px;background:#e3f4d9;"></div>
<div class="t" style="left:1023px;top:433.15px;font-size:14px;line-height:14px;color:#222;font-weight:400;">$</div>
<div class="t" style="left:1105px;top:433.15px;font-size:14px;line-height:14px;color:#222;font-weight:400;transform:translateX(-100%);letter-spacing:0.1px;">2,468.00</div>
<div class="r" style="left:1112px;top:428px;width:96px;height:22px;background:#e3f4d9;"></div>
<div class="t" style="left:1118px;top:433.15px;font-size:14px;line-height:14px;color:#222;font-weight:400;">$</div>
<div class="t" style="left:1204px;top:433.15px;font-size:14px;line-height:14px;color:#222;font-weight:400;transform:translateX(-100%);letter-spacing:0.1px;">29,543.00</div>
<div class="r" style="left:1211px;top:428px;width:102px;height:22px;background:#e3f4d9;"></div>
<div class="t" style="left:1217px;top:433.15px;font-size:14px;line-height:14px;color:#222;font-weight:400;">$</div>
<div class="t" style="left:1309px;top:433.15px;font-size:14px;line-height:14px;color:#222;font-weight:400;transform:translateX(-100%);letter-spacing:0.1px;">5,482.00</div>
<div class="r" style="left:1316px;top:428px;width:100px;height:22px;background:#e3f4d9;"></div>
<div class="t" style="left:1322px;top:433.15px;font-size:14px;line-height:14px;color:#222;font-weight:400;">$</div>
<div class="t" style="left:1412px;top:433.15px;font-size:14px;line-height:14px;color:#222;font-weight:400;transform:translateX(-100%);letter-spacing:0.1px;">13,654.00</div>
<div class="r" style="left:1419px;top:428px;width:95px;height:22px;background:#c9ebb0;"></div>
<div class="t" style="left:1425px;top:433.57px;font-size:13.5px;line-height:13.5px;color:#222;font-weight:400;">$</div>
<div class="t" style="left:1506px;top:433.15px;font-size:14px;line-height:14px;color:#222;font-weight:400;transform:translateX(-100%);letter-spacing:0.1px;">264,097.00</div>
<div class="r" style="left:34px;top:453px;width:235px;height:22px;background:#7dcf3c;"></div>
<div class="t" style="left:35.5px;top:459.20px;font-size:13.7px;line-height:13.7px;color:#fff;font-weight:700;letter-spacing:0.3px;">Costs of materials</div>
<div class="r" style="left:272px;top:453px;width:93px;height:22px;background:#e3f4d9;"></div>
<div class="t" style="left:278px;top:458.15px;font-size:14px;line-height:14px;color:#222;font-weight:400;">$</div>
<div class="t" style="left:361px;top:458.15px;font-size:14px;line-height:14px;color:#222;font-weight:400;transform:translateX(-100%);letter-spacing:0.1px;">780.00</div>
<div class="r" style="left:368px;top:453px;width:103px;height:22px;background:#e3f4d9;"></div>
<div class="t" style="left:374px;top:458.15px;font-size:14px;line-height:14px;color:#222;font-weight:400;">$</div>
<div class="t" style="left:467px;top:458.15px;font-size:14px;line-height:14px;color:#222;font-weight:400;transform:translateX(-100%);letter-spacing:0.1px;">540.00</div>
<div class="r" style="left:474px;top:453px;width:106px;height:22px;background:#e3f4d9;"></div>
<div class="t" style="left:480px;top:458.15px;font-size:14px;line-height:14px;color:#222;font-weight:400;">$</div>
<div class="t" style="left:576px;top:458.15px;font-size:14px;line-height:14px;color:#222;font-weight:400;transform:translateX(-100%);letter-spacing:0.1px;">360.00</div>
<div class="r" style="left:583px;top:453px;width:83px;height:22px;background:#e3f4d9;"></div>
<div class="t" style="left:589px;top:458.15px;font-size:14px;line-height:14px;color:#222;font-weight:400;">$</div>
<div class="t" style="left:662px;top:458.15px;font-size:14px;line-height:14px;color:#222;font-weight:400;transform:translateX(-100%);letter-spacing:0.1px;">2,402.00</div>
<div class="r" style="left:669px;top:453px;width:83px;height:22px;background:#e3f4d9;"></div>
<div class="t" style="left:675px;top:458.15px;font-size:14px;line-height:14px;color:#222;font-weight:400;">$</div>
<div class="t" style="left:748px;top:458.15px;font-size:14px;line-height:14px;color:#222;font-weight:400;transform:translateX(-100%);letter-spacing:0.1px;">590.00</div>
<div class="r" style="left:755px;top:453px;width:84px;height:22px;background:#e3f4d9;"></div>
<div class="t" style="left:761px;top:458.15px;font-size:14px;line-height:14px;color:#222;font-weight:400;">$</div>
<div class="t" style="left:835px;top:458.15px;font-size:14px;line-height:14px;color:#222;font-weight:400;transform:translateX(-100%);letter-spacing:0.1px;">300.00</div>
<div class="r" style="left:842px;top:453px;width:83px;height:22px;background:#e3f4d9;"></div>
<div class="t" style="left:848px;top:458.15px;font-size:14px;line-height:14px;color:#222;font-weight:400;">$</div>
<div class="t" style="left:921px;top:458.15px;font-size:14px;line-height:14px;color:#222;font-weight:400;transform:translateX(-100%);letter-spacing:0.1px;">115.00</div>
<div class="r" style="left:928px;top:453px;width:86px;height:22px;background:#e3f4d9;"></div>
<div class="t" style="left:934px;top:458.15px;font-size:14px;line-height:14px;color:#222;font-weight:400;">$</div>
<div class="t" style="left:1010px;top:458.15px;font-size:14px;line-height:14px;color:#222;font-weight:400;transform:translateX(-100%);letter-spacing:0.1px;">1,120.00</div>
<div class="r" style="left:1017px;top:453px;width:92px;height:22px;background:#e3f4d9;"></div>
<div class="t" style="left:1023px;top:458.15px;font-size:14px;line-height:14px;color:#222;font-weight:400;">$</div>
<div class="t" style="left:1105px;top:458.15px;font-size:14px;line-height:14px;color:#222;font-weight:400;transform:translateX(-100%);letter-spacing:0.1px;">980.00</div>
<div class="r" style="left:1112px;top:453px;width:96px;height:22px;background:#e3f4d9;"></div>
<div class="t" style="left:1118px;top:458.15px;font-size:14px;line-height:14px;color:#222;font-weight:400;">$</div>
<div class="t" style="left:1204px;top:458.15px;font-size:14px;line-height:14px;color:#222;font-weight:400;transform:translateX(-100%);letter-spacing:0.1px;">760.00</div>
<div class="r" style="left:1211px;top:453px;width:102px;height:22px;background:#e3f4d9;"></div>
<div class="t" style="left:1217px;top:458.15px;font-size:14px;line-height:14px;color:#222;font-weight:400;">$</div>
<div class="t" style="left:1309px;top:458.15px;font-size:14px;line-height:14px;color:#222;font-weight:400;transform:translateX(-100%);letter-spacing:0.1px;">450.00</div>
<div class="r" style="left:1316px;top:453px;width:100px;height:22px;background:#e3f4d9;"></div>
<div class="t" style="left:1322px;top:458.15px;font-size:14px;line-height:14px;color:#222;font-weight:400;">$</div>
<div class="t" style="left:1412px;top:458.15px;font-size:14px;line-height:14px;color:#222;font-weight:400;transform:translateX(-100%);letter-spacing:0.1px;">850.00</div>
<div class="r" style="left:1419px;top:453px;width:95px;height:22px;background:#c9ebb0;"></div>
<div class="t" style="left:1425px;top:458.57px;font-size:13.5px;line-height:13.5px;color:#222;font-weight:400;">$</div>
<div class="t" style="left:1506px;top:458.15px;font-size:14px;line-height:14px;color:#222;font-weight:400;transform:translateX(-100%);letter-spacing:0.1px;">9,247.00</div>
<div class="r" style="left:34px;top:478px;width:235px;height:22px;background:#7dcf3c;"></div>
<div class="t" style="left:35.5px;top:484.20px;font-size:13.7px;line-height:13.7px;color:#fff;font-weight:700;letter-spacing:0.3px;">Overhead costs</div>
<div class="r" style="left:272px;top:478px;width:93px;height:22px;background:#e3f4d9;"></div>
<div class="t" style="left:278px;top:483.15px;font-size:14px;line-height:14px;color:#222;font-weight:400;">$</div>
<div class="t" style="left:361px;top:483.15px;font-size:14px;line-height:14px;color:#222;font-weight:400;transform:translateX(-100%);letter-spacing:0.1px;">1,450.00</div>
<div class="r" style="left:368px;top:478px;width:103px;height:22px;background:#e3f4d9;"></div>
<div class="t" style="left:374px;top:483.15px;font-size:14px;line-height:14px;color:#222;font-weight:400;">$</div>
<div class="t" style="left:467px;top:483.15px;font-size:14px;line-height:14px;color:#222;font-weight:400;transform:translateX(-100%);letter-spacing:0.1px;">10,650.00</div>
<div class="r" style="left:474px;top:478px;width:106px;height:22px;background:#e3f4d9;"></div>
<div class="t" style="left:480px;top:483.15px;font-size:14px;line-height:14px;color:#222;font-weight:400;">$</div>
<div class="t" style="left:576px;top:483.15px;font-size:14px;line-height:14px;color:#222;font-weight:400;transform:translateX(-100%);letter-spacing:0.1px;">850.00</div>
<div class="r" style="left:583px;top:478px;width:83px;height:22px;background:#e3f4d9;"></div>
<div class="t" style="left:589px;top:483.15px;font-size:14px;line-height:14px;color:#222;font-weight:400;">$</div>
<div class="t" style="left:662px;top:483.15px;font-size:14px;line-height:14px;color:#222;font-weight:400;transform:translateX(-100%);letter-spacing:0.1px;">210.00</div>
<div class="r" style="left:669px;top:478px;width:83px;height:22px;background:#e3f4d9;"></div>
<div class="t" style="left:675px;top:483.15px;font-size:14px;line-height:14px;color:#222;font-weight:400;">$</div>
<div class="t" style="left:748px;top:483.15px;font-size:14px;line-height:14px;color:#222;font-weight:400;transform:translateX(-100%);letter-spacing:0.1px;">320.00</div>
<div class="r" style="left:755px;top:478px;width:84px;height:22px;background:#e3f4d9;"></div>
<div class="t" style="left:761px;top:483.15px;font-size:14px;line-height:14px;color:#222;font-weight:400;">$</div>
<div class="t" style="left:835px;top:483.15px;font-size:14px;line-height:14px;color:#222;font-weight:400;transform:translateX(-100%);letter-spacing:0.1px;">560.00</div>
<div class="r" style="left:842px;top:478px;width:83px;height:22px;background:#e3f4d9;"></div>
<div class="t" style="left:848px;top:483.15px;font-size:14px;line-height:14px;color:#222;font-weight:400;">$</div>
<div class="t" style="left:921px;top:483.15px;font-size:14px;line-height:14px;color:#222;font-weight:400;transform:translateX(-100%);letter-spacing:0.1px;">740.00</div>
<div class="r" style="left:928px;top:478px;width:86px;height:22px;background:#e3f4d9;"></div>
<div class="t" style="left:934px;top:483.15px;font-size:14px;line-height:14px;color:#222;font-weight:400;">$</div>
<div class="t" style="left:1010px;top:483.15px;font-size:14px;line-height:14px;color:#222;font-weight:400;transform:translateX(-100%);letter-spacing:0.1px;">15,030.00</div>
<div class="r" style="left:1017px;top:478px;width:92px;height:22px;background:#e3f4d9;"></div>
<div class="t" style="left:1023px;top:483.15px;font-size:14px;line-height:14px;color:#222;font-weight:400;">$</div>
<div class="t" style="left:1105px;top:483.15px;font-size:14px;line-height:14px;color:#222;font-weight:400;transform:translateX(-100%);letter-spacing:0.1px;">230.00</div>
<div class="r" style="left:1112px;top:478px;width:96px;height:22px;background:#e3f4d9;"></div>
<div class="t" style="left:1118px;top:483.15px;font-size:14px;line-height:14px;color:#222;font-weight:400;">$</div>
<div class="t" style="left:1204px;top:483.15px;font-size:14px;line-height:14px;color:#222;font-weight:400;transform:translateX(-100%);letter-spacing:0.1px;">150.00</div>
<div class="r" style="left:1211px;top:478px;width:102px;height:22px;background:#e3f4d9;"></div>
<div class="t" style="left:1217px;top:483.15px;font-size:14px;line-height:14px;color:#222;font-weight:400;">$</div>
<div class="t" style="left:1309px;top:483.15px;font-size:14px;line-height:14px;color:#222;font-weight:400;transform:translateX(-100%);letter-spacing:0.1px;">560.00</div>
<div class="r" style="left:1316px;top:478px;width:100px;height:22px;background:#e3f4d9;"></div>
<div class="t" style="left:1322px;top:483.15px;font-size:14px;line-height:14px;color:#222;font-weight:400;">$</div>
<div class="t" style="left:1412px;top:483.15px;font-size:14px;line-height:14px;color:#222;font-weight:400;transform:translateX(-100%);letter-spacing:0.1px;">870.00</div>
<div class="r" style="left:1419px;top:478px;width:95px;height:22px;background:#c9ebb0;"></div>
<div class="t" style="left:1425px;top:483.57px;font-size:13.5px;line-height:13.5px;color:#222;font-weight:400;">$</div>
<div class="t" style="left:1506px;top:483.15px;font-size:14px;line-height:14px;color:#222;font-weight:400;transform:translateX(-100%);letter-spacing:0.1px;">31,620.00</div>
<div class="r" style="left:34px;top:503px;width:235px;height:22px;background:#7dcf3c;"></div>
<div class="t" style="left:35.5px;top:509.20px;font-size:13.7px;line-height:13.7px;color:#fff;font-weight:700;letter-spacing:0.3px;">Gross margin</div>
<div class="r" style="left:272px;top:503px;width:93px;height:22px;background:#e3f4d9;"></div>
<div class="t" style="left:278px;top:508.15px;font-size:14px;line-height:14px;color:#222;font-weight:400;">$</div>
<div class="t" style="left:361px;top:508.15px;font-size:14px;line-height:14px;color:#222;font-weight:400;transform:translateX(-100%);letter-spacing:0.1px;">23,410.00</div>
<div class="r" style="left:368px;top:503px;width:103px;height:22px;background:#e3f4d9;"></div>
<div class="t" style="left:374px;top:508.15px;font-size:14px;line-height:14px;color:#222;font-weight:400;">$</div>
<div class="t" style="left:467px;top:508.15px;font-size:14px;line-height:14px;color:#222;font-weight:400;transform:translateX(-100%);letter-spacing:0.1px;">116,633.00</div>
<div class="r" style="left:474px;top:503px;width:106px;height:22px;background:#e3f4d9;"></div>
<div class="t" style="left:480px;top:508.15px;font-size:14px;line-height:14px;color:#222;font-weight:400;">$</div>
<div class="t" style="left:576px;top:508.15px;font-size:14px;line-height:14px;color:#222;font-weight:400;transform:translateX(-100%);letter-spacing:0.1px;">3,376.00</div>
<div class="r" style="left:583px;top:503px;width:83px;height:22px;background:#e3f4d9;"></div>
<div class="t" style="left:589px;top:508.15px;font-size:14px;line-height:14px;color:#222;font-weight:400;">$</div>
<div class="t" style="left:666px;top:508.15px;font-size:14px;line-height:14px;color:#222;font-weight:400;transform:translateX(-100%);letter-spacing:0.1px;">(1,354.00)</div>
<div class="r" style="left:669px;top:503px;width:83px;height:22px;background:#e3f4d9;"></div>
<div class="t" style="left:748px;top:508.15px;font-size:14px;line-height:14px;color:#222;font-weight:400;transform:translateX(-100%);letter-spacing:0.1px;">$12,748.00</div>
<div class="r" style="left:755px;top:503px;width:84px;height:22px;background:#e3f4d9;"></div>
<div class="t" style="left:761px;top:508.15px;font-size:14px;line-height:14px;color:#222;font-weight:400;">$</div>
<div class="t" style="left:835px;top:508.15px;font-size:14px;line-height:14px;color:#222;font-weight:400;transform:translateX(-100%);letter-spacing:0.1px;">9,596.00</div>
<div class="r" style="left:842px;top:503px;width:83px;height:22px;background:#e3f4d9;"></div>
<div class="t" style="left:848px;top:508.15px;font-size:14px;line-height:14px;color:#222;font-weight:400;">$</div>
<div class="t" style="left:921px;top:508.15px;font-size:14px;line-height:14px;color:#222;font-weight:400;transform:translateX(-100%);letter-spacing:0.1px;">1,734.00</div>
<div class="r" style="left:928px;top:503px;width:86px;height:22px;background:#e3f4d9;"></div>
<div class="t" style="left:934px;top:508.15px;font-size:14px;line-height:14px;color:#222;font-weight:400;">$</div>
<div class="t" style="left:1010px;top:508.15px;font-size:14px;line-height:14px;color:#222;font-weight:400;transform:translateX(-100%);letter-spacing:0.1px;">10,790.00</div>
<div class="r" style="left:1017px;top:503px;width:92px;height:22px;background:#e3f4d9;"></div>
<div class="t" style="left:1023px;top:508.15px;font-size:14px;line-height:14px;color:#222;font-weight:400;">$</div>
<div class="t" style="left:1105px;top:508.15px;font-size:14px;line-height:14px;color:#222;font-weight:400;transform:translateX(-100%);letter-spacing:0.1px;">1,258.00</div>
<div class="r" style="left:1112px;top:503px;width:96px;height:22px;background:#e3f4d9;"></div>
<div class="t" style="left:1118px;top:508.15px;font-size:14px;line-height:14px;color:#222;font-weight:400;">$</div>
<div class="t" style="left:1204px;top:508.15px;font-size:14px;line-height:14px;color:#222;font-weight:400;transform:translateX(-100%);letter-spacing:0.1px;">28,633.00</div>
<div class="r" style="left:1211px;top:503px;width:102px;height:22px;background:#e3f4d9;"></div>
<div class="t" style="left:1217px;top:508.15px;font-size:14px;line-height:14px;color:#222;font-weight:400;">$</div>
<div class="t" style="left:1309px;top:508.15px;font-size:14px;line-height:14px;color:#222;font-weight:400;transform:translateX(-100%);letter-spacing:0.1px;">4,472.00</div>
<div class="r" style="left:1316px;top:503px;width:100px;height:22px;background:#e3f4d9;"></div>
<div class="t" style="left:1322px;top:508.15px;font-size:14px;line-height:14px;color:#222;font-weight:400;">$</div>
<div class="t" style="left:1412px;top:508.15px;font-size:14px;line-height:14px;color:#222;font-weight:400;transform:translateX(-100%);letter-spacing:0.1px;">11,934.00</div>
<div class="r" style="left:1419px;top:503px;width:95px;height:22px;background:#c9ebb0;"></div>
<div class="t" style="left:1425px;top:508.57px;font-size:13.5px;line-height:13.5px;color:#222;font-weight:400;">$</div>
<div class="t" style="left:1506px;top:508.15px;font-size:14px;line-height:14px;color:#222;font-weight:400;transform:translateX(-100%);letter-spacing:0.1px;">223,230.00</div>
<div class="r" style="left:34px;top:528px;width:235px;height:22px;background:#7dcf3c;"></div>
<div class="t" style="left:35.5px;top:534.20px;font-size:13.7px;line-height:13.7px;color:#fff;font-weight:700;letter-spacing:0.3px;">Cost of sales</div>
<div class="r" style="left:272px;top:528px;width:93px;height:22px;background:#e3f4d9;"></div>
<div class="t" style="left:278px;top:533.15px;font-size:14px;line-height:14px;color:#222;font-weight:400;">$</div>
<div class="t" style="left:361px;top:533.15px;font-size:14px;line-height:14px;color:#222;font-weight:400;transform:translateX(-100%);letter-spacing:0.1px;">24,525.00</div>
<div class="r" style="left:368px;top:528px;width:103px;height:22px;background:#e3f4d9;"></div>
<div class="t" style="left:374px;top:533.15px;font-size:14px;line-height:14px;color:#222;font-weight:400;">$</div>
<div class="t" style="left:467px;top:533.15px;font-size:14px;line-height:14px;color:#222;font-weight:400;transform:translateX(-100%);letter-spacing:0.1px;">122,228.00</div>
<div class="r" style="left:474px;top:528px;width:106px;height:22px;background:#e3f4d9;"></div>
<div class="t" style="left:480px;top:533.15px;font-size:14px;line-height:14px;color:#222;font-weight:400;">$</div>
<div class="t" style="left:576px;top:533.15px;font-size:14px;line-height:14px;color:#222;font-weight:400;transform:translateX(-100%);letter-spacing:0.1px;">3,981.00</div>
<div class="r" style="left:583px;top:528px;width:83px;height:22px;background:#e3f4d9;"></div>
<div class="t" style="left:589px;top:533.15px;font-size:14px;line-height:14px;color:#222;font-weight:400;">$</div>
<div class="t" style="left:666px;top:533.15px;font-size:14px;line-height:14px;color:#222;font-weight:400;transform:translateX(-100%);letter-spacing:0.1px;">(48.00)</div>
<div class="r" style="left:669px;top:528px;width:83px;height:22px;background:#e3f4d9;"></div>
<div class="t" style="left:748px;top:533.15px;font-size:14px;line-height:14px;color:#222;font-weight:400;transform:translateX(-100%);letter-spacing:0.1px;">$13,203.00</div>
<div class="r" style="left:755px;top:528px;width:84px;height:22px;background:#e3f4d9;"></div>
<div class="t" style="left:835px;top:533.15px;font-size:14px;line-height:14px;color:#222;font-weight:400;transform:translateX(-100%);letter-spacing:0.1px;">$10,026.00</div>
<div class="r" style="left:842px;top:528px;width:83px;height:22px;background:#e3f4d9;"></div>
<div class="t" style="left:848px;top:533.15px;font-size:14px;line-height:14px;color:#222;font-weight:400;">$</div>
<div class="t" style="left:921px;top:533.15px;font-size:14px;line-height:14px;color:#222;font-weight:400;transform:translateX(-100%);letter-spacing:0.1px;">2,161.50</div>
<div class="r" style="left:928px;top:528px;width:86px;height:22px;background:#e3f4d9;"></div>
<div class="t" style="left:934px;top:533.15px;font-size:14px;line-height:14px;color:#222;font-weight:400;">$</div>
<div class="t" style="left:1010px;top:533.15px;font-size:14px;line-height:14px;color:#222;font-weight:400;transform:translateX(-100%);letter-spacing:0.1px;">18,865.00</div>
<div class="r" style="left:1017px;top:528px;width:92px;height:22px;background:#e3f4d9;"></div>
<div class="t" style="left:1023px;top:533.15px;font-size:14px;line-height:14px;color:#222;font-weight:400;">$</div>
<div class="t" style="left:1105px;top:533.15px;font-size:14px;line-height:14px;color:#222;font-weight:400;transform:translateX(-100%);letter-spacing:0.1px;">1,863.00</div>
<div class="r" style="left:1112px;top:528px;width:96px;height:22px;background:#e3f4d9;"></div>
<div class="t" style="left:1118px;top:533.15px;font-size:14px;line-height:14px;color:#222;font-weight:400;">$</div>
<div class="t" style="left:1204px;top:533.15px;font-size:14px;line-height:14px;color:#222;font-weight:400;transform:translateX(-100%);letter-spacing:0.1px;">29,088.00</div>
<div class="r" style="left:1211px;top:528px;width:102px;height:22px;background:#e3f4d9;"></div>
<div class="t" style="left:1217px;top:533.15px;font-size:14px;line-height:14px;color:#222;font-weight:400;">$</div>
<div class="t" style="left:1309px;top:533.15px;font-size:14px;line-height:14px;color:#222;font-weight:400;transform:translateX(-100%);letter-spacing:0.1px;">4,977.00</div>
<div class="r" style="left:1316px;top:528px;width:100px;height:22px;background:#e3f4d9;"></div>
<div class="t" style="left:1322px;top:533.15px;font-size:14px;line-height:14px;color:#222;font-weight:400;">$</div>
<div class="t" style="left:1412px;top:533.15px;font-size:14px;line-height:14px;color:#222;font-weight:400;transform:translateX(-100%);letter-spacing:0.1px;">12,794.00</div>
<div class="r" style="left:1419px;top:528px;width:95px;height:22px;background:#c9ebb0;"></div>
<div class="t" style="left:1425px;top:533.57px;font-size:13.5px;line-height:13.5px;color:#222;font-weight:400;">$</div>
<div class="t" style="left:1506px;top:533.15px;font-size:14px;line-height:14px;color:#222;font-weight:400;transform:translateX(-100%);letter-spacing:0.1px;">243,663.50</div>
<div class="r" style="left:34px;top:553px;width:235px;height:22px;background:#7dcf3c;"></div>
<div class="t" style="left:35.5px;top:559.20px;font-size:13.7px;line-height:13.7px;color:#fff;font-weight:700;letter-spacing:0.3px;">Business expense</div>
<div class="r" style="left:272px;top:553px;width:93px;height:22px;background:#e3f4d9;"></div>
<div class="t" style="left:278px;top:558.15px;font-size:14px;line-height:14px;color:#222;font-weight:400;">$</div>
<div class="t" style="left:361px;top:558.15px;font-size:14px;line-height:14px;color:#222;font-weight:400;transform:translateX(-100%);letter-spacing:0.1px;">2,230.00</div>
<div class="r" style="left:368px;top:553px;width:103px;height:22px;background:#e3f4d9;"></div>
<div class="t" style="left:374px;top:558.15px;font-size:14px;line-height:14px;color:#222;font-weight:400;">$</div>
<div class="t" style="left:467px;top:558.15px;font-size:14px;line-height:14px;color:#222;font-weight:400;transform:translateX(-100%);letter-spacing:0.1px;">11,190.00</div>
<div class="r" style="left:474px;top:553px;width:106px;height:22px;background:#e3f4d9;"></div>
<div class="t" style="left:480px;top:558.15px;font-size:14px;line-height:14px;color:#222;font-weight:400;">$</div>
<div class="t" style="left:576px;top:558.15px;font-size:14px;line-height:14px;color:#222;font-weight:400;transform:translateX(-100%);letter-spacing:0.1px;">1,210.00</div>
<div class="r" style="left:583px;top:553px;width:83px;height:22px;background:#e3f4d9;"></div>
<div class="t" style="left:589px;top:558.15px;font-size:14px;line-height:14px;color:#222;font-weight:400;">$</div>
<div class="t" style="left:662px;top:558.15px;font-size:14px;line-height:14px;color:#222;font-weight:400;transform:translateX(-100%);letter-spacing:0.1px;">2,612.00</div>
<div class="r" style="left:669px;top:553px;width:83px;height:22px;background:#e3f4d9;"></div>
<div class="t" style="left:675px;top:558.15px;font-size:14px;line-height:14px;color:#222;font-weight:400;">$</div>
<div class="t" style="left:748px;top:558.15px;font-size:14px;line-height:14px;color:#222;font-weight:400;transform:translateX(-100%);letter-spacing:0.1px;">910.00</div>
<div class="r" style="left:755px;top:553px;width:84px;height:22px;background:#e3f4d9;"></div>
<div class="t" style="left:761px;top:558.15px;font-size:14px;line-height:14px;color:#222;font-weight:400;">$</div>
<div class="t" style="left:835px;top:558.15px;font-size:14px;line-height:14px;color:#222;font-weight:400;transform:translateX(-100%);letter-spacing:0.1px;">860.00</div>
<div class="r" style="left:842px;top:553px;width:83px;height:22px;background:#e3f4d9;"></div>
<div class="t" style="left:848px;top:558.15px;font-size:14px;line-height:14px;color:#222;font-weight:400;">$</div>
<div class="t" style="left:921px;top:558.15px;font-size:14px;line-height:14px;color:#222;font-weight:400;transform:translateX(-100%);letter-spacing:0.1px;">855.00</div>
<div class="r" style="left:928px;top:553px;width:86px;height:22px;background:#e3f4d9;"></div>
<div class="t" style="left:934px;top:558.15px;font-size:14px;line-height:14px;color:#222;font-weight:400;">$</div>
<div class="t" style="left:1010px;top:558.15px;font-size:14px;line-height:14px;color:#222;font-weight:400;transform:translateX(-100%);letter-spacing:0.1px;">16,150.00</div>
<div class="r" style="left:1017px;top:553px;width:92px;height:22px;background:#e3f4d9;"></div>
<div class="t" style="left:1023px;top:558.15px;font-size:14px;line-height:14px;color:#222;font-weight:400;">$</div>
<div class="t" style="left:1105px;top:558.15px;font-size:14px;line-height:14px;color:#222;font-weight:400;transform:translateX(-100%);letter-spacing:0.1px;">1,210.00</div>
<div class="r" style="left:1112px;top:553px;width:96px;height:22px;background:#e3f4d9;"></div>
<div class="t" style="left:1118px;top:558.15px;font-size:14px;line-height:14px;color:#222;font-weight:400;">$</div>
<div class="t" style="left:1204px;top:558.15px;font-size:14px;line-height:14px;color:#222;font-weight:400;transform:translateX(-100%);letter-spacing:0.1px;">910.00</div>
<div class="r" style="left:1211px;top:553px;width:102px;height:22px;background:#e3f4d9;"></div>
<div class="t" style="left:1217px;top:558.15px;font-size:14px;line-height:14px;color:#222;font-weight:400;">$</div>
<div class="t" style="left:1309px;top:558.15px;font-size:14px;line-height:14px;color:#222;font-weight:400;transform:translateX(-100%);letter-spacing:0.1px;">1,010.00</div>
<div class="r" style="left:1316px;top:553px;width:100px;height:22px;background:#e3f4d9;"></div>
<div class="t" style="left:1322px;top:558.15px;font-size:14px;line-height:14px;color:#222;font-weight:400;">$</div>
<div class="t" style="left:1412px;top:558.15px;font-size:14px;line-height:14px;color:#222;font-weight:400;transform:translateX(-100%);letter-spacing:0.1px;">1,720.00</div>
<div class="r" style="left:1419px;top:553px;width:95px;height:22px;background:#c9ebb0;"></div>
<div class="t" style="left:1425px;top:558.57px;font-size:13.5px;line-height:13.5px;color:#222;font-weight:400;">$</div>
<div class="t" style="left:1506px;top:558.15px;font-size:14px;line-height:14px;color:#222;font-weight:400;transform:translateX(-100%);letter-spacing:0.1px;">40,867.00</div>
<div class="r" style="left:34px;top:578px;width:235px;height:22px;background:#7dcf3c;"></div>
<div class="t" style="left:35.5px;top:584.20px;font-size:13.7px;line-height:13.7px;color:#fff;font-weight:700;letter-spacing:0.3px;">Management expenses</div>
<div class="r" style="left:272px;top:578px;width:93px;height:22px;background:#c6efce;"></div>
<div class="t" style="left:319.0px;top:582.38px;font-size:15.5px;line-height:15.5px;color:#006100;font-weight:700;transform:translateX(-50%);">10%</div>
<div class="r" style="left:368px;top:578px;width:103px;height:22px;background:#ffc7ce;"></div>
<div class="t" style="left:420.0px;top:582.38px;font-size:15.5px;line-height:15.5px;color:#9c0006;font-weight:700;transform:translateX(-50%);">10%</div>
<div class="r" style="left:474px;top:578px;width:106px;height:22px;background:#c6efce;"></div>
<div class="t" style="left:527.5px;top:582.38px;font-size:15.5px;line-height:15.5px;color:#006100;font-weight:700;transform:translateX(-50%);">36%</div>
<div class="r" style="left:583px;top:578px;width:83px;height:22px;background:#c6efce;"></div>
<div class="t" style="left:625.0px;top:582.38px;font-size:15.5px;line-height:15.5px;color:#006100;font-weight:700;transform:translateX(-50%);">-193%</div>
<div class="r" style="left:669px;top:578px;width:83px;height:22px;background:#c6efce;"></div>
<div class="t" style="left:711.0px;top:582.38px;font-size:15.5px;line-height:15.5px;color:#006100;font-weight:700;transform:translateX(-50%);">7%</div>
<div class="r" style="left:755px;top:578px;width:84px;height:22px;background:#ffc7ce;"></div>
<div class="t" style="left:797.5px;top:582.38px;font-size:15.5px;line-height:15.5px;color:#9c0006;font-weight:700;transform:translateX(-50%);">0%</div>
<div class="r" style="left:842px;top:578px;width:83px;height:22px;background:#c6efce;"></div>
<div class="t" style="left:884.0px;top:582.38px;font-size:15.5px;line-height:15.5px;color:#006100;font-weight:700;transform:translateX(-50%);">49%</div>
<div class="r" style="left:928px;top:578px;width:86px;height:22px;background:#ffc7ce;"></div>
<div class="t" style="left:971.5px;top:582.38px;font-size:15.5px;line-height:15.5px;color:#9c0006;font-weight:700;transform:translateX(-50%);">150%</div>
<div class="r" style="left:1017px;top:578px;width:92px;height:22px;background:#c6efce;"></div>
<div class="t" style="left:1063.5px;top:582.38px;font-size:15.5px;line-height:15.5px;color:#006100;font-weight:700;transform:translateX(-50%);">96%</div>
<div class="r" style="left:1112px;top:578px;width:96px;height:22px;background:#ffc7ce;"></div>
<div class="t" style="left:1160.5px;top:582.38px;font-size:15.5px;line-height:15.5px;color:#9c0006;font-weight:700;transform:translateX(-50%);">3%</div>
<div class="r" style="left:1211px;top:578px;width:102px;height:22px;background:#ffc7ce;"></div>
<div class="t" style="left:1262.5px;top:582.38px;font-size:15.5px;line-height:15.5px;color:#9c0006;font-weight:700;transform:translateX(-50%);">23%</div>
<div class="r" style="left:1316px;top:578px;width:100px;height:22px;background:#c6efce;"></div>
<div class="t" style="left:1366.5px;top:582.38px;font-size:15.5px;line-height:15.5px;color:#006100;font-weight:700;transform:translateX(-50%);">14%</div>
<div class="r" style="left:1419px;top:578px;width:95px;height:22px;background:#c6efce;"></div>
<div class="t" style="left:1467.0px;top:582.38px;font-size:15.5px;line-height:15.5px;color:#006100;font-weight:700;transform:translateX(-50%);">12%</div>
<div class="r" style="left:34px;top:603px;width:235px;height:22px;background:#7dcf3c;"></div>
<div class="t" style="left:35.5px;top:609.20px;font-size:13.7px;line-height:13.7px;color:#fff;font-weight:700;letter-spacing:0.3px;">Other income</div>
<div class="r" style="left:272px;top:603px;width:93px;height:22px;background:#e3f4d9;"></div>
<div class="t" style="left:278px;top:608.15px;font-size:14px;line-height:14px;color:#222;font-weight:400;">$</div>
<div class="t" style="left:361px;top:608.15px;font-size:14px;line-height:14px;color:#222;font-weight:400;transform:translateX(-100%);letter-spacing:0.1px;">15,161.00</div>
<div class="r" style="left:368px;top:603px;width:103px;height:22px;background:#e3f4d9;"></div>
<div class="t" style="left:374px;top:608.15px;font-size:14px;line-height:14px;color:#222;font-weight:400;">$</div>
<div class="t" style="left:467px;top:608.15px;font-size:14px;line-height:14px;color:#222;font-weight:400;transform:translateX(-100%);letter-spacing:0.1px;">75,574.80</div>
<div class="r" style="left:474px;top:603px;width:106px;height:22px;background:#e3f4d9;"></div>
<div class="t" style="left:480px;top:608.15px;font-size:14px;line-height:14px;color:#222;font-weight:400;">$</div>
<div class="t" style="left:576px;top:608.15px;font-size:14px;line-height:14px;color:#222;font-weight:400;transform:translateX(-100%);letter-spacing:0.1px;">2,630.60</div>
<div class="r" style="left:583px;top:603px;width:83px;height:22px;background:#e3f4d9;"></div>
<div class="t" style="left:589px;top:608.15px;font-size:14px;line-height:14px;color:#222;font-weight:400;">$</div>
<div class="t" style="left:662px;top:608.15px;font-size:14px;line-height:14px;color:#222;font-weight:400;transform:translateX(-100%);letter-spacing:0.1px;">493.60</div>
<div class="r" style="left:669px;top:603px;width:83px;height:22px;background:#e3f4d9;"></div>
<div class="t" style="left:675px;top:608.15px;font-size:14px;line-height:14px;color:#222;font-weight:400;">$</div>
<div class="t" style="left:748px;top:608.15px;font-size:14px;line-height:14px;color:#222;font-weight:400;transform:translateX(-100%);letter-spacing:0.1px;">8,103.80</div>
<div class="r" style="left:755px;top:603px;width:84px;height:22px;background:#e3f4d9;"></div>
<div class="t" style="left:761px;top:608.15px;font-size:14px;line-height:14px;color:#222;font-weight:400;">$</div>
<div class="t" style="left:835px;top:608.15px;font-size:14px;line-height:14px;color:#222;font-weight:400;transform:translateX(-100%);letter-spacing:0.1px;">6,187.60</div>
<div class="r" style="left:842px;top:603px;width:83px;height:22px;background:#e3f4d9;"></div>
<div class="t" style="left:848px;top:608.15px;font-size:14px;line-height:14px;color:#222;font-weight:400;">$</div>
<div class="t" style="left:921px;top:608.15px;font-size:14px;line-height:14px;color:#222;font-weight:400;transform:translateX(-100%);letter-spacing:0.1px;">1,467.90</div>
<div class="r" style="left:928px;top:603px;width:86px;height:22px;background:#e3f4d9;"></div>
<div class="t" style="left:934px;top:608.15px;font-size:14px;line-height:14px;color:#222;font-weight:400;">$</div>
<div class="t" style="left:1010px;top:608.15px;font-size:14px;line-height:14px;color:#222;font-weight:400;transform:translateX(-100%);letter-spacing:0.1px;">14,549.00</div>
<div class="r" style="left:1017px;top:603px;width:92px;height:22px;background:#e3f4d9;"></div>
<div class="t" style="left:1023px;top:608.15px;font-size:14px;line-height:14px;color:#222;font-weight:400;">$</div>
<div class="t" style="left:1105px;top:608.15px;font-size:14px;line-height:14px;color:#222;font-weight:400;transform:translateX(-100%);letter-spacing:0.1px;">1,359.80</div>
<div class="r" style="left:1112px;top:603px;width:96px;height:22px;background:#e3f4d9;"></div>
<div class="t" style="left:1118px;top:608.15px;font-size:14px;line-height:14px;color:#222;font-weight:400;">$</div>
<div class="t" style="left:1204px;top:608.15px;font-size:14px;line-height:14px;color:#222;font-weight:400;transform:translateX(-100%);letter-spacing:0.1px;">17,634.80</div>
<div class="r" style="left:1211px;top:603px;width:102px;height:22px;background:#e3f4d9;"></div>
<div class="t" style="left:1217px;top:608.15px;font-size:14px;line-height:14px;color:#222;font-weight:400;">$</div>
<div class="t" style="left:1309px;top:608.15px;font-size:14px;line-height:14px;color:#222;font-weight:400;transform:translateX(-100%);letter-spacing:0.1px;">3,188.20</div>
<div class="r" style="left:1316px;top:603px;width:100px;height:22px;background:#e3f4d9;"></div>
<div class="t" style="left:1322px;top:608.15px;font-size:14px;line-height:14px;color:#222;font-weight:400;">$</div>
<div class="t" style="left:1412px;top:608.15px;font-size:14px;line-height:14px;color:#222;font-weight:400;transform:translateX(-100%);letter-spacing:0.1px;">8,020.40</div>
<div class="r" style="left:1419px;top:603px;width:95px;height:22px;background:#c9ebb0;"></div>
<div class="t" style="left:1425px;top:608.57px;font-size:13.5px;line-height:13.5px;color:#222;font-weight:400;">$</div>
<div class="t" style="left:1506px;top:608.15px;font-size:14px;line-height:14px;color:#222;font-weight:400;transform:translateX(-100%);letter-spacing:0.1px;">154,371.50</div>
<div class="r" style="left:176px;top:628px;width:1px;height:17px;background:#dcdcdc;"></div>
<div class="r" style="left:270px;top:628px;width:1px;height:17px;background:#dcdcdc;"></div>
<div class="r" style="left:366px;top:628px;width:1px;height:17px;background:#dcdcdc;"></div>
<div class="r" style="left:472px;top:628px;width:1px;height:17px;background:#dcdcdc;"></div>
<div class="r" style="left:581px;top:628px;width:1px;height:17px;background:#dcdcdc;"></div>
<div class="r" style="left:667px;top:628px;width:1px;height:17px;background:#dcdcdc;"></div>
<div class="r" style="left:753px;top:628px;width:1px;height:17px;background:#dcdcdc;"></div>
<div class="r" style="left:840px;top:628px;width:1px;height:17px;background:#dcdcdc;"></div>
<div class="r" style="left:926px;top:628px;width:1px;height:17px;background:#dcdcdc;"></div>
<div class="r" style="left:1015px;top:628px;width:1px;height:17px;background:#dcdcdc;"></div>
<div class="r" style="left:1110px;top:628px;width:1px;height:17px;background:#dcdcdc;"></div>
<div class="r" style="left:1209px;top:628px;width:1px;height:17px;background:#dcdcdc;"></div>
<div class="r" style="left:1314px;top:628px;width:1px;height:17px;background:#dcdcdc;"></div>
<div class="r" style="left:1417px;top:628px;width:1px;height:17px;background:#dcdcdc;"></div>
<div class="r" style="left:1515px;top:628px;width:1px;height:17px;background:#dcdcdc;"></div>
<svg class="r" style="left:0;top:0" width="1478" height="645"><g transform="translate(-375,-184)"><rect x="407.5" y="285.5" width="505" height="250" fill="#fff" stroke="#d9d9d9" stroke-width="1"/><text x="667.5" y="318.5" font-family="Liberation Sans, sans-serif" font-size="23" font-weight="700" fill="#595959" text-anchor="middle">SUMMER</text><path d="M796.4 419.2 L796.3 421.8 L796.0 424.4 L795.5 427.0 L794.7 429.6 L793.8 432.1 L792.6 434.7 L791.3 437.2 L789.7 439.7 L788.0 442.1 L786.0 444.5 L783.8 446.9 L781.5 449.3 L779.0 451.5 L776.3 453.8 L773.4 456.0 L770.3 458.1 L767.1 460.2 L763.6 462.2 L760.1 464.1 L756.4 466.0 L752.5 467.8 L748.5 469.5 L744.3 471.2 L740.1 472.8 L735.6 474.2 L731.1 475.6 L726.5 477.0 L721.8 478.2 L716.9 479.3 L712.0 480.4 L707.0 481.3 L701.9 482.2 L696.8 482.9 L691.6 483.6 L686.4 484.1 L681.1 484.6 L675.8 484.9 L670.4 485.2 L665.1 485.3 L659.7 485.4 L659.7 516.4 L665.1 516.3 L670.4 516.2 L675.8 515.9 L681.1 515.6 L686.4 515.1 L691.6 514.6 L696.8 513.9 L701.9 513.2 L707.0 512.3 L712.0 511.4 L716.9 510.3 L721.8 509.2 L726.5 508.0 L731.1 506.6 L735.6 505.2 L740.1 503.8 L744.3 502.2 L748.5 500.5 L752.5 498.8 L756.4 497.0 L760.1 495.1 L763.6 493.2 L767.1 491.2 L770.3 489.1 L773.4 487.0 L776.3 484.8 L779.0 482.5 L781.5 480.3 L783.8 477.9 L786.0 475.5 L788.0 473.1 L789.7 470.7 L791.3 468.2 L792.6 465.7 L793.8 463.1 L794.7 460.6 L795.5 458.0 L796.0 455.4 L796.3 452.8 L796.4 450.2 Z" fill="#4f8526"/><path d="M659.7 485.4 L658.5 485.4 L657.4 485.4 L656.2 485.4 L655.0 485.4 L653.9 485.3 L652.7 485.3 L651.6 485.3 L650.4 485.2 L649.2 485.2 L648.1 485.2 L646.9 485.1 L645.8 485.1 L644.6 485.0 L643.5 484.9 L642.3 484.9 L641.1 484.8 L640.0 484.7 L638.8 484.6 L637.7 484.5 L636.5 484.4 L635.4 484.3 L634.3 484.2 L633.1 484.1 L632.0 484.0 L630.8 483.9 L629.7 483.8 L628.6 483.7 L627.4 483.5 L626.3 483.4 L625.2 483.3 L624.1 483.1 L622.9 483.0 L621.8 482.8 L620.7 482.6 L619.6 482.5 L618.5 482.3 L617.4 482.1 L616.3 482.0 L615.2 481.8 L614.1 481.6 L614.1 512.6 L615.2 512.8 L616.3 513.0 L617.4 513.1 L618.5 513.3 L619.6 513.5 L620.7 513.6 L621.8 513.8 L622.9 514.0 L624.1 514.1 L625.2 514.3 L626.3 514.4 L627.4 514.5 L628.6 514.7 L629.7 514.8 L630.8 514.9 L632.0 515.0 L633.1 515.1 L634.3 515.2 L635.4 515.3 L636.5 515.4 L637.7 515.5 L638.8 515.6 L640.0 515.7 L641.1 515.8 L642.3 515.9 L643.5 515.9 L644.6 516.0 L645.8 516.1 L646.9 516.1 L648.1 516.2 L649.2 516.2 L650.4 516.2 L651.6 516.3 L652.7 516.3 L653.9 516.3 L655.0 516.4 L656.2 516.4 L657.4 516.4 L658.5 516.4 L659.7 516.4 Z" fill="#006a89"/><path d="M614.1 481.6 L610.1 480.9 L606.2 480.1 L602.4 479.3 L598.6 478.4 L594.9 477.5 L591.2 476.5 L587.6 475.4 L584.1 474.3 L580.6 473.2 L577.2 472.0 L573.9 470.7 L570.6 469.4 L567.5 468.1 L564.4 466.7 L561.5 465.2 L558.6 463.8 L555.8 462.2 L553.1 460.7 L550.5 459.1 L548.1 457.4 L545.7 455.7 L543.4 454.0 L541.3 452.3 L539.2 450.5 L537.3 448.7 L535.5 446.8 L533.8 445.0 L532.2 443.1 L530.8 441.2 L529.4 439.2 L528.2 437.3 L527.1 435.3 L526.2 433.3 L525.3 431.3 L524.6 429.3 L524.0 427.3 L523.6 425.3 L523.3 423.3 L523.1 421.2 L523.0 419.2 L523.0 450.2 L523.1 452.2 L523.3 454.3 L523.6 456.3 L524.0 458.3 L524.6 460.3 L525.3 462.3 L526.2 464.3 L527.1 466.3 L528.2 468.3 L529.4 470.2 L530.8 472.2 L532.2 474.1 L533.8 476.0 L535.5 477.8 L537.3 479.7 L539.2 481.5 L541.3 483.3 L543.4 485.0 L545.7 486.7 L548.1 488.4 L550.5 490.1 L553.1 491.7 L555.8 493.2 L558.6 494.8 L561.5 496.2 L564.4 497.7 L567.5 499.1 L570.6 500.4 L573.9 501.7 L577.2 503.0 L580.6 504.2 L584.1 505.3 L587.6 506.4 L591.2 507.5 L594.9 508.5 L598.6 509.4 L602.4 510.3 L606.2 511.1 L610.1 511.9 L614.1 512.6 Z" fill="#2f5217"/><path d="M659.7 419.2 L659.7 485.4 L652.5 485.3 L645.4 485.0 L638.3 484.6 L631.3 484.0 L624.3 483.1 L617.5 482.2 L610.7 481.0 L604.1 479.7 L597.6 478.2 L591.4 476.5 L585.2 474.7 L579.3 472.8 L573.7 470.6 L568.2 468.4 L563.0 466.0 L558.1 463.5 L553.5 460.9 L549.1 458.1 L545.1 455.3 L541.3 452.3 L537.9 449.3 L534.8 446.1 L532.1 442.9 L529.7 439.7 L527.7 436.3 L526.0 433.0 L524.7 429.6 L523.7 426.1 L523.2 422.7 L523.0 419.2 L523.2 415.7 L523.7 412.3 L524.7 408.8 L526.0 405.4 L527.7 402.1 L529.7 398.7 L532.1 395.5 L534.8 392.3 L537.9 389.1 L541.3 386.1 L545.1 383.1 L549.1 380.3 L553.5 377.5 L558.1 374.9 L563.0 372.4 L568.2 370.0 L573.7 367.8 L579.3 365.6 L585.2 363.7 L591.4 361.9 L597.6 360.2 L604.1 358.7 L610.7 357.4 L617.5 356.2 L624.3 355.3 L631.3 354.4 L638.3 353.8 L645.4 353.4 L652.5 353.1 L659.7 353.0 Z" fill="#4e8224"/><path d="M659.7 419.2 L659.7 353.0 L666.9 353.1 L674.0 353.4 L681.1 353.8 L688.1 354.4 L695.1 355.3 L701.9 356.2 L708.7 357.4 L715.3 358.7 L721.8 360.2 L728.1 361.9 L734.2 363.7 L740.1 365.6 L745.7 367.8 L751.2 370.0 L756.4 372.4 L761.3 374.9 L765.9 377.5 L770.3 380.3 L774.3 383.1 L778.1 386.1 L781.5 389.1 L784.6 392.3 L787.3 395.5 L789.7 398.7 L791.7 402.1 L793.4 405.4 L794.7 408.8 L795.7 412.3 L796.2 415.7 L796.4 419.2 L796.2 422.7 L795.7 426.1 L794.7 429.6 L793.4 433.0 L791.7 436.3 L789.7 439.7 L787.3 442.9 L784.6 446.1 L781.5 449.3 L778.1 452.3 L774.3 455.3 L770.3 458.1 L765.9 460.9 L761.3 463.5 L756.4 466.0 L751.2 468.4 L745.7 470.6 L740.1 472.8 L734.2 474.7 L728.1 476.5 L721.8 478.2 L715.3 479.7 L708.7 481.0 L701.9 482.2 L695.1 483.1 L688.1 484.0 L681.1 484.6 L674.0 485.0 L666.9 485.3 L659.7 485.4 Z" fill="#7dd13d"/><path d="M659.7 411 L659.7 485.4 L659.7 485.4 L657.4 485.4 L655.0 485.4 L652.7 485.3 L650.4 485.2 L648.1 485.2 L645.8 485.1 L643.5 484.9 L641.1 484.8 L638.8 484.6 L636.5 484.4 L634.3 484.2 L632.0 484.0 L629.7 483.8 L627.4 483.5 L625.2 483.3 L622.9 483.0 L620.7 482.6 L618.5 482.3 L616.3 482.0 L614.1 481.6 Z" fill="#00abdd"/><text font-family="Liberation Sans, sans-serif" font-size="14.5" font-weight="700" fill="#4e8224" text-anchor="middle"><tspan x="503.5" y="345">Total Gross</tspan><tspan x="503" y="366">margin</tspan></text><text x="803" y="428" font-family="Liberation Sans, sans-serif" font-size="14.5" font-weight="700" fill="#7dd13d">Total income</text><text font-family="Liberation Sans, sans-serif" font-size="14.5" font-weight="700" fill="#00abdd" text-anchor="middle"><tspan x="601.5" y="494">Total</tspan><tspan x="601.5" y="514.5">expenses</tspan></text><rect x="912.5" y="286.5" width="414.5" height="248.5" fill="#fff" stroke="#d9d9d9" stroke-width="1.2"/><text x="1121" y="326" font-family="Liberation Sans, sans-serif" font-size="25" font-weight="700" fill="#7f7f7f" text-anchor="middle" letter-spacing="2.6">MONTHLY SALE</text><defs><pattern id="stripes" width="4" height="2" patternUnits="userSpaceOnUse"><rect width="4" height="2" fill="#c5eca7"/><rect width="4" height="1" fill="#8fd65c"/></pattern></defs><rect x="1092" y="355" width="6" height="7" fill="url(#stripes)"/><text x="1106" y="363.5" font-family="Liberation Sans, sans-serif" font-size="13.5" fill="#595959">Series 1</text><text x="987" y="403" font-family="Liberation Sans, sans-serif" font-size="13.5" fill="#595959" text-anchor="end">$3,000.00</text><text x="987" y="431" font-family="Liberation Sans, sans-serif" font-size="13.5" fill="#595959" text-anchor="end">$2,000.00</text><text x="987" y="459" font-family="Liberation Sans, sans-serif" font-size="13.5" fill="#595959" text-anchor="end">$1,000.00</text><text x="987" y="487" font-family="Liberation Sans, sans-serif" font-size="13.5" fill="#595959" text-anchor="end">$-</text><rect x="1011.8" y="459.0" width="10.5" height="23.0" fill="url(#stripes)"/><rect x="1012.8" y="458.0" width="10" height="2" fill="#5d9a33" opacity="0.8"/><rect x="1021.8" y="459.0" width="1.2" height="23.0" fill="#4d7a2a" opacity="0.8"/><text x="1017.1" y="510" font-family="Liberation Sans, sans-serif" font-size="13.5" fill="#595959" text-anchor="middle">1</text><rect x="1036.8" y="465.7" width="10.5" height="16.3" fill="url(#stripes)"/><rect x="1037.8" y="464.7" width="10" height="2" fill="#5d9a33" opacity="0.8"/><rect x="1046.8" y="465.7" width="1.2" height="16.3" fill="#4d7a2a" opacity="0.8"/><text x="1042.1" y="510" font-family="Liberation Sans, sans-serif" font-size="13.5" fill="#595959" text-anchor="middle">2</text><rect x="1061.8" y="470.7" width="10.5" height="11.3" fill="url(#stripes)"/><rect x="1062.8" y="469.7" width="10" height="2" fill="#5d9a33" opacity="0.8"/><rect x="1071.8" y="470.7" width="1.2" height="11.3" fill="#4d7a2a" opacity="0.8"/><text x="1067.1" y="510" font-family="Liberation Sans, sans-serif" font-size="13.5" fill="#595959" text-anchor="middle">3</text><rect x="1086.8" y="414.5" width="10.5" height="67.5" fill="url(#stripes)"/><rect x="1087.8" y="413.5" width="10" height="2" fill="#5d9a33" opacity="0.8"/><rect x="1096.8" y="414.5" width="1.2" height="67.5" fill="#4d7a2a" opacity="0.8"/><text x="1092.1" y="510" font-family="Liberation Sans, sans-serif" font-size="13.5" fill="#595959" text-anchor="middle">4</text><rect x="1111.8" y="464.2" width="10.5" height="17.8" fill="url(#stripes)"/><rect x="1112.8" y="463.2" width="10" height="2" fill="#5d9a33" opacity="0.8"/><rect x="1121.8" y="464.2" width="1.2" height="17.8" fill="#4d7a2a" opacity="0.8"/><text x="1117.1" y="510" font-family="Liberation Sans, sans-serif" font-size="13.5" fill="#595959" text-anchor="middle">5</text><rect x="1136.8" y="472.2" width="10.5" height="9.8" fill="url(#stripes)"/><rect x="1137.8" y="471.2" width="10" height="2" fill="#5d9a33" opacity="0.8"/><rect x="1146.8" y="472.2" width="1.2" height="9.8" fill="#4d7a2a" opacity="0.8"/><text x="1142.1" y="510" font-family="Liberation Sans, sans-serif" font-size="13.5" fill="#595959" text-anchor="middle">6</text><rect x="1161.8" y="477.2" width="10.5" height="4.8" fill="url(#stripes)"/><rect x="1162.8" y="476.2" width="10" height="2" fill="#5d9a33" opacity="0.8"/><rect x="1171.8" y="477.2" width="1.2" height="4.8" fill="#4d7a2a" opacity="0.8"/><text x="1167.1" y="510" font-family="Liberation Sans, sans-serif" font-size="13.5" fill="#595959" text-anchor="middle">7</text><rect x="1186.8" y="449.4" width="10.5" height="32.6" fill="url(#stripes)"/><rect x="1187.8" y="448.4" width="10" height="2" fill="#5d9a33" opacity="0.8"/><rect x="1196.8" y="449.4" width="1.2" height="32.6" fill="#4d7a2a" opacity="0.8"/><text x="1192.1" y="510" font-family="Liberation Sans, sans-serif" font-size="13.5" fill="#595959" text-anchor="middle">8</text><rect x="1211.8" y="453.6" width="10.5" height="28.4" fill="url(#stripes)"/><rect x="1212.8" y="452.6" width="10" height="2" fill="#5d9a33" opacity="0.8"/><rect x="1221.8" y="453.6" width="1.2" height="28.4" fill="#4d7a2a" opacity="0.8"/><text x="1217.1" y="510" font-family="Liberation Sans, sans-serif" font-size="13.5" fill="#595959" text-anchor="middle">9</text><rect x="1236.8" y="459.5" width="10.5" height="22.5" fill="url(#stripes)"/><rect x="1237.8" y="458.5" width="10" height="2" fill="#5d9a33" opacity="0.8"/><rect x="1246.8" y="459.5" width="1.2" height="22.5" fill="#4d7a2a" opacity="0.8"/><text x="1242.1" y="510" font-family="Liberation Sans, sans-serif" font-size="13.5" fill="#595959" text-anchor="middle">10</text><rect x="1261.8" y="468.3" width="10.5" height="13.7" fill="url(#stripes)"/><rect x="1262.8" y="467.3" width="10" height="2" fill="#5d9a33" opacity="0.8"/><rect x="1271.8" y="468.3" width="1.2" height="13.7" fill="#4d7a2a" opacity="0.8"/><text x="1267.1" y="510" font-family="Liberation Sans, sans-serif" font-size="13.5" fill="#595959" text-anchor="middle">11</text><rect x="1286.8" y="457.4" width="10.5" height="24.6" fill="url(#stripes)"/><rect x="1287.8" y="456.4" width="10" height="2" fill="#5d9a33" opacity="0.8"/><rect x="1296.8" y="457.4" width="1.2" height="24.6" fill="#4d7a2a" opacity="0.8"/><text x="1292.1" y="510" font-family="Liberation Sans, sans-serif" font-size="13.5" fill="#595959" text-anchor="middle">12</text><rect x="1337.5" y="285.5" width="600" height="223.5" fill="#fff" stroke="#d9d9d9" stroke-width="1.2"/><text x="1611" y="317.5" font-family="Liberation Sans, sans-serif" font-size="20.3" font-weight="700" fill="#7f7f7f" text-anchor="middle">Dynamics of Sales and Gross margin</text><defs><linearGradient id="pg" x1="0" y1="0" x2="0" y2="1"><stop offset="0" stop-color="#ffffff"/><stop offset="1" stop-color="#ececec"/></linearGradient></defs><rect x="1427" y="348" width="500" height="124" fill="url(#pg)"/><rect x="1427" y="447" width="500" height="1.3" fill="#d0d0d0"/><text x="1413.5" y="350" font-family="Liberation Sans, sans-serif" font-size="14" fill="#595959" text-anchor="end">$20,000.00</text><text x="1413.5" y="375.5" font-family="Liberation Sans, sans-serif" font-size="14" fill="#595959" text-anchor="end">$15,000.00</text><text x="1413.5" y="401" font-family="Liberation Sans, sans-serif" font-size="14" fill="#595959" text-anchor="end">$10,000.00</text><text x="1413.5" y="427" font-family="Liberation Sans, sans-serif" font-size="14" fill="#595959" text-anchor="end">$5,000.00</text><text x="1413.5" y="453.5" font-family="Liberation Sans, sans-serif" font-size="14" fill="#595959" text-anchor="end">$-</text><text x="1413.5" y="479" font-family="Liberation Sans, sans-serif" font-size="14" fill="#595959" text-anchor="end">$(5,000.00)</text><polyline points="1445.3,448.6 1480.4,419.0 1515.5,408.0 1550.6,424.3 1585.7,441.2 1620.8,429.4 1655.9,441.2 1691.0,434.7 1726.1,433.8 1761.2,435.3 1796.3,399.2 1831.4,419.9 1853.5,425.8" fill="none" stroke="#7dd13d" stroke-width="3" stroke-linejoin="round"/><polyline points="1445.3,448.0 1480.4,345.0 1515.5,345.0 1550.6,407.2 1585.7,448.6 1620.8,364.3 1655.9,390.9 1691.0,425.5 1726.1,379.7 1761.2,428.5 1796.3,345.7 1831.4,396.2 1853.5,377.6" fill="none" stroke="#e6157a" stroke-width="3" stroke-linejoin="round"/><text x="1445.3" y="476.5" font-family="Liberation Sans, sans-serif" font-size="14" fill="#595959" text-anchor="middle">1</text><text x="1480.4" y="476.5" font-family="Liberation Sans, sans-serif" font-size="14" fill="#595959" text-anchor="middle">2</text><text x="1515.5" y="476.5" font-family="Liberation Sans, sans-serif" font-size="14" fill="#595959" text-anchor="middle">3</text><text x="1550.6" y="476.5" font-family="Liberation Sans, sans-serif" font-size="14" fill="#595959" text-anchor="middle">4</text><text x="1585.7" y="476.5" font-family="Liberation Sans, sans-serif" font-size="14" fill="#595959" text-anchor="middle">5</text><text x="1620.8" y="476.5" font-family="Liberation Sans, sans-serif" font-size="14" fill="#595959" text-anchor="middle">6</text><text x="1655.9" y="476.5" font-family="Liberation Sans, sans-serif" font-size="14" fill="#595959" text-anchor="middle">7</text><text x="1691.0" y="476.5" font-family="Liberation Sans, sans-serif" font-size="14" fill="#595959" text-anchor="middle">8</text><text x="1726.1" y="476.5" font-family="Liberation Sans, sans-serif" font-size="14" fill="#595959" text-anchor="middle">9</text><text x="1761.2" y="476.5" font-family="Liberation Sans, sans-serif" font-size="14" fill="#595959" text-anchor="middle">10</text><text x="1796.3" y="476.5" font-family="Liberation Sans, sans-serif" font-size="14" fill="#595959" text-anchor="middle">11</text><text x="1831.4" y="476.5" font-family="Liberation Sans, sans-serif" font-size="14" fill="#595959" text-anchor="middle">12</text><rect x="1518" y="488" width="35.5" height="3" fill="#7dd13d"/><text x="1557" y="494" font-family="Liberation Sans, sans-serif" font-size="13.5" fill="#595959">Sale</text><rect x="1584" y="488" width="36" height="3" fill="#e6157a"/><text x="1623.5" y="494" font-family="Liberation Sans, sans-serif" font-size="13.5" fill="#595959">Gross margin</text></g></svg>
</div>
<div class="r" style="left:1853px;top:184px;width:17px;height:663px;background:#e2e2e2;"></div>
<div class="r" style="left:1854px;top:185px;width:13px;height:15px;background:#f4f4f4;border:1px solid #d8d8d8;box-sizing:border-box;"></div>
<svg class="r" style="left:1855px;top:189px;" width="11" height="6" viewBox="0 0 11 6"><path d="M1.5 5.5 L5.5 1 L9.5 5.5 Z" fill="#adadad"/></svg>
<div class="r" style="left:1854px;top:221px;width:14px;height:236px;background:#f4f4f4;border:1px solid #d0d0d0;box-sizing:border-box;"></div>
<svg class="r" style="left:1856px;top:332px;" width="9" height="12" viewBox="0 0 9 12"><path d="M0 1.5 H9" stroke="#c4c4c4" stroke-width="1"/><path d="M0 3.5 H9" stroke="#c4c4c4" stroke-width="1"/><path d="M0 5.5 H9" stroke="#c4c4c4" stroke-width="1"/><path d="M0 7.5 H9" stroke="#c4c4c4" stroke-width="1"/><path d="M0 9.5 H9" stroke="#c4c4c4" stroke-width="1"/></svg>
<div class="r" style="left:1854px;top:812px;width:13px;height:15px;background:#f4f4f4;border:1px solid #d8d8d8;box-sizing:border-box;"></div>
<svg class="r" style="left:1855px;top:817px;" width="11" height="6" viewBox="0 0 11 6"><path d="M1.5 0.5 L5.5 5 L9.5 0.5 Z" fill="#adadad"/></svg>
<div class="r" style="left:375px;top:829px;width:1478px;height:18px;background:#e2e2e2;"></div>
<div class="r" style="left:377px;top:830px;width:15px;height:15px;background:#f4f4f4;border:1px solid #d8d8d8;box-sizing:border-box;"></div>
<svg class="r" style="left:380px;top:833px;" width="9" height="10" viewBox="0 0 9 10"><path d="M6.5 1 L2 5 L6.5 9 Z" fill="#adadad"/></svg>
<div class="r" style="left:393px;top:830px;width:1349px;height:15px;background:#f4f4f4;border:1px solid #d0d0d0;box-sizing:border-box;"></div>
<svg class="r" style="left:1058px;top:833px;" width="14" height="9" viewBox="0 0 14 9"><path d="M1.5 0 V9" stroke="#c4c4c4" stroke-width="1"/><path d="M3.5 0 V9" stroke="#c4c4c4" stroke-width="1"/><path d="M5.5 0 V9" stroke="#c4c4c4" stroke-width="1"/><path d="M7.5 0 V9" stroke="#c4c4c4" stroke-width="1"/><path d="M9.5 0 V9" stroke="#c4c4c4" stroke-width="1"/><path d="M11.5 0 V9" stroke="#c4c4c4" stroke-width="1"/></svg>
<div class="r" style="left:1836px;top:830px;width:15px;height:15px;background:#f4f4f4;border:1px solid #d8d8d8;box-sizing:border-box;"></div>
<svg class="r" style="left:1839px;top:833px;" width="9" height="10" viewBox="0 0 9 10"><path d="M2.5 1 L7 5 L2.5 9 Z" fill="#adadad"/></svg>
<div class="r" style="left:374px;top:153px;width:1px;height:694px;background:#c4c4c4;"></div>
</body></html>
